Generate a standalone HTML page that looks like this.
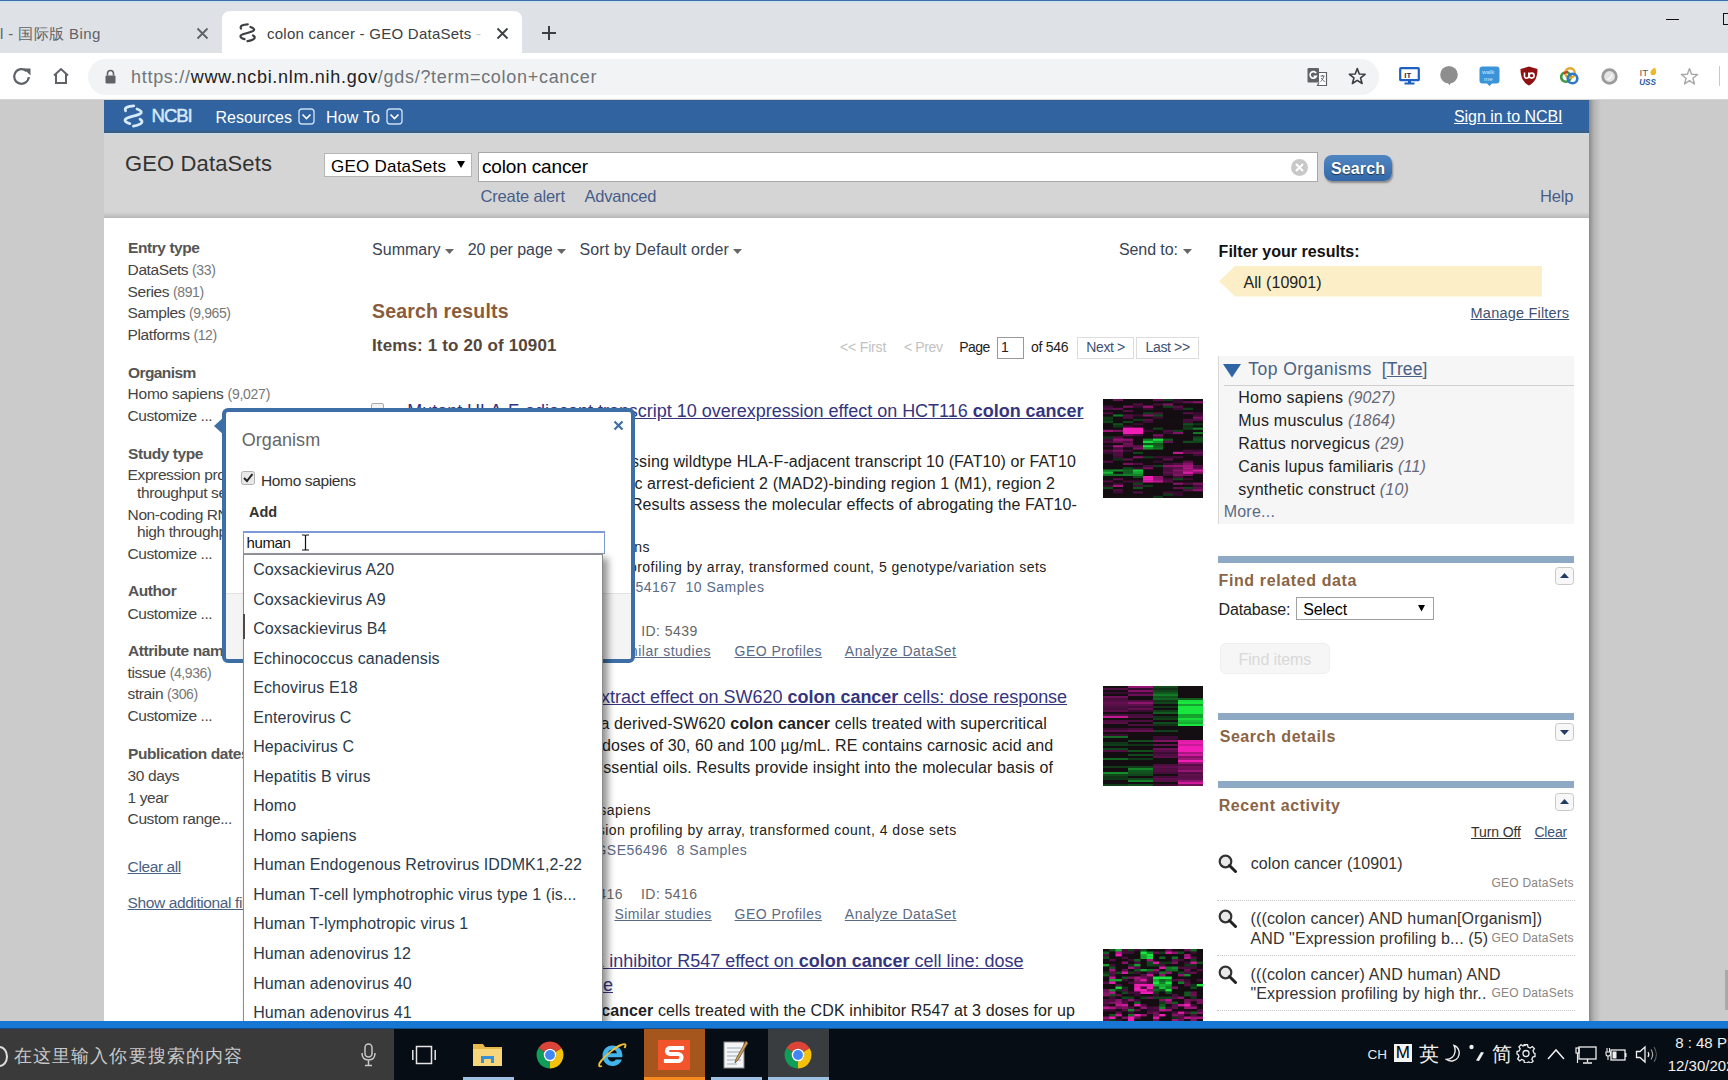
<!DOCTYPE html>
<html><head><meta charset="utf-8"><title>colon cancer - GEO DataSets</title>
<style>
html,body{margin:0;padding:0;}
body{width:1728px;height:1080px;position:relative;overflow:hidden;background:#cbcbcb;font-family:'Liberation Sans', sans-serif;}
b{font-weight:700;}
</style></head><body>
<div style="position:absolute;left:0;top:0;width:1728px;height:53px;background:#dee1e6;"></div>
<div style="position:absolute;left:0;top:0;width:1728px;height:1px;background:#3b6fa8;"></div>
<div style="position:absolute;left:0;top:1px;width:1728px;height:2px;background:#cfe0f0;"></div>
<div style="position:absolute;left:222px;top:11px;width:300px;height:43px;background:#fff;border-radius:8px 8px 0 0;"></div>
<div style="position:absolute;left:0;top:53px;width:1728px;height:46px;background:#fff;border-bottom:1px solid #d6d6d6;"></div>
<div style="position:absolute;left:88px;top:59px;width:1291px;height:36px;background:#f1f3f4;border-radius:18px;"></div>
<svg style="position:absolute;left:196px;top:27px" width="13" height="13"><path d="M1.5 1.5L11.5 11.5M11.5 1.5L1.5 11.5" stroke="#5f6368" stroke-width="1.8"/></svg>
<svg style="position:absolute;left:495.5px;top:27px" width="13" height="13"><path d="M1.5 1.5L11.5 11.5M11.5 1.5L1.5 11.5" stroke="#3c4043" stroke-width="1.8"/></svg>
<svg style="position:absolute;left:541px;top:25px" width="16" height="16"><path d="M8 1V15M1 8H15" stroke="#3c4043" stroke-width="2"/></svg>
<svg style="position:absolute;left:238px;top:22px" width="20" height="22" viewBox="0 0 20 22"><path d="M9.8 2.3C5 2.5 1.5 4 3 6.5M12.5 5C18 7 17 9 11 10.5C5 12 1 13 3 15.5C4 16.5 5.5 17 6.5 17.2M15 13.5C18 15 17.5 18 9.5 19.2" fill="none" stroke="#3c4043" stroke-width="2.2" stroke-linecap="round"/></svg>
<div style="position:absolute;left:1666px;top:19px;width:13px;height:1px;background:#111;"></div>
<div style="position:absolute;left:1723px;top:13px;width:12px;height:12px;border:1px solid #111;box-sizing:border-box;"></div>
<svg style="position:absolute;left:11px;top:66px" width="22" height="21" viewBox="0 0 22 21"><path d="M17.8 11A7.3 7.3 0 1 1 15.6 5.2" fill="none" stroke="#5f6368" stroke-width="2.2"/><path d="M12.5 2.5H19.5V9.5Z" fill="#5f6368"/></svg>
<svg style="position:absolute;left:52px;top:67px" width="18" height="18" viewBox="0 0 18 18"><path d="M2 8.5L9 2L16 8.5M4 7V16H14V7" fill="none" stroke="#5f6368" stroke-width="2" stroke-linejoin="miter"/></svg>
<svg style="position:absolute;left:104px;top:69px" width="13" height="15" viewBox="0 0 13 15"><path d="M3.5 6.5V4.5A3 3 0 0 1 9.5 4.5V6.5" fill="none" stroke="#5f6368" stroke-width="1.6"/><rect x="1.5" y="6.5" width="10" height="8" rx="1" fill="#5f6368"/></svg>
<svg style="position:absolute;left:1306px;top:67px" width="22" height="20" viewBox="0 0 22 20"><rect x="1.5" y="1" width="11.5" height="14.5" rx="1" fill="#5f6368"/><path d="M10.2 6.2A3.3 3.3 0 1 0 10.3 9.4H7.6" fill="none" stroke="#fff" stroke-width="1.6"/><path d="M13 5.5H20.5V18.5H11.5L13 15.5" fill="#fff" stroke="#5f6368" stroke-width="1.2"/><path d="M14.5 9H18.5M16.5 8V9M17.8 9C17.5 11.5 16 13.5 14.5 14.5M15.3 11C16 12.5 17.5 14 18.8 14.5" fill="none" stroke="#5f6368" stroke-width="1"/></svg>
<svg style="position:absolute;left:1348px;top:67.3px" width="18.5" height="18.5" viewBox="-1 -1 18.5 18.5"><polygon points="8.25,0.60 10.29,6.05 16.10,6.30 11.55,9.92 13.10,15.52 8.25,12.31 3.40,15.52 4.95,9.92 0.40,6.30 6.21,6.05" fill="none" stroke="#3c4043" stroke-width="1.6" stroke-linejoin="round"/></svg>
<svg style="position:absolute;left:1680.3px;top:66.8px" width="19" height="19" viewBox="-1 -1 19 19"><polygon points="8.50,0.60 10.60,6.21 16.58,6.47 11.90,10.20 13.50,15.98 8.50,12.67 3.50,15.98 5.10,10.20 0.42,6.47 6.40,6.21" fill="none" stroke="#a8a8a8" stroke-width="1.4" stroke-linejoin="round"/></svg>
<svg style="position:absolute;left:1399px;top:67px" width="21" height="18" viewBox="0 0 21 18"><rect x="1.2" y="1.2" width="18.6" height="12" rx="0.8" fill="#fff" stroke="#1d5fc4" stroke-width="2.2"/><text x="5.3" y="10.6" font-size="7.8" font-weight="700" font-family="Liberation Sans" fill="#1e3050">IT</text><rect x="9" y="13.5" width="3" height="2.5" fill="#1d5fc4"/><rect x="5.5" y="15.5" width="10" height="2" fill="#1d5fc4"/></svg>
<svg style="position:absolute;left:1439px;top:65px" width="20" height="23" viewBox="0 0 20 23"><circle cx="10" cy="9.8" r="8.8" fill="#8e8e8e"/><path d="M8 16L10.5 20.5L12.5 16Z" fill="#8e8e8e"/></svg>
<svg style="position:absolute;left:1478.5px;top:65.5px" width="21" height="21" viewBox="0 0 21 21"><path d="M3.5 0.5H17.5A3 3 0 0 1 20.5 3.5V14.5A3 3 0 0 1 17.5 17.5H13L10.5 20L8 17.5H3.5A3 3 0 0 1 0.5 14.5V3.5A3 3 0 0 1 3.5 0.5Z" fill="#3b94d9"/><text x="3" y="8.2" font-size="6.2" fill="#cfe8ff" font-family="Liberation Sans">walk</text><text x="5" y="14.5" font-size="6.2" fill="#cfe8ff" font-family="Liberation Sans">me</text></svg>
<svg style="position:absolute;left:1520px;top:66px" width="18" height="20" viewBox="0 0 18 20"><path d="M9 0.5L17.5 3C17.5 11 15 16.5 9 19.5C3 16.5 0.5 11 0.5 3Z" fill="#8e1212"/><path d="M4.5 6.5V10.5A2.2 2.2 0 0 0 8.8 10.5V6.5" fill="none" stroke="#fff" stroke-width="1.6"/><circle cx="11.6" cy="9.6" r="2.5" fill="none" stroke="#fff" stroke-width="1.6"/></svg>
<svg style="position:absolute;left:1560px;top:66.5px" width="19" height="18" viewBox="0 0 19 18"><circle cx="6" cy="10" r="4.8" fill="none" stroke="#3f9a3f" stroke-width="2.6"/><circle cx="10" cy="6" r="4.8" fill="none" stroke="#e2a72a" stroke-width="2.4"/><circle cx="12.5" cy="11.5" r="4.8" fill="none" stroke="#2d78c8" stroke-width="2.6"/><path d="M4 7C5 5 7 4.5 8 5" fill="none" stroke="#c93a2a" stroke-width="2"/></svg>
<svg style="position:absolute;left:1600.5px;top:68px" width="17" height="17" viewBox="0 0 17 17"><circle cx="8.5" cy="8.5" r="6.8" fill="#e4e4e4" stroke="#9a9a9a" stroke-width="2.8"/><path d="M6 11.5C8 11 10.5 9.5 11 6.5" fill="none" stroke="#fff" stroke-width="1.2"/></svg>
<svg style="position:absolute;left:1638px;top:65px" width="22" height="21" viewBox="0 0 22 21"><text x="1.5" y="10.8" font-size="9.8" fill="#5a5a5a" font-family="Liberation Sans">IT</text><path d="M12.5 8C12.5 5 15 3.5 17.5 2.5C17 4 18.5 5 18 8C17.5 11 12.5 11 12.5 8Z" fill="#f1b52a"/><text x="1.2" y="19.5" font-size="8.2" font-weight="700" font-style="italic" fill="#2a5aa8" font-family="Liberation Sans">USS</text></svg>
<div style="position:absolute;left:1719px;top:66px;width:1px;height:20px;background:#c8c8c8;"></div>
<div style="position:absolute;left:104px;top:100px;width:1485px;height:921px;background:#fff;"></div>
<div style="position:absolute;left:1589px;top:100px;width:12px;height:921px;background:linear-gradient(to right, rgba(0,0,0,0.32), rgba(0,0,0,0.12) 40%, rgba(0,0,0,0));"></div>
<div style="position:absolute;left:104px;top:100px;width:1485px;height:33px;background:linear-gradient(#3d5f85 0, #3163a0 1.5px, #3064a0 30px, #3a5c80 32px, #3a5c80 33px);"></div>
<div style="position:absolute;left:104px;top:133px;width:1485px;height:2px;background:linear-gradient(#c6dcf0,#d3d8dc);z-index:1"></div>
<div style="position:absolute;left:104px;top:133px;width:1485px;height:85px;background:linear-gradient(#d5d5d5 0, #d5d5d5 79px, #c2c2c2 83px, #b5b5b5 85px);"></div>
<svg style="position:absolute;left:122px;top:102.5px" width="24" height="26.4" viewBox="0 0 20 22"><path d="M9.8 2.3C5 2.5 1.5 4 3 6.5M12.5 5C18 7 17 9 11 10.5C5 12 1 13 3 15.5C4 16.5 5.5 17 6.5 17.2M15 13.5C18 15 17.5 18 9.5 19.2" fill="none" stroke="#d6eafb" stroke-width="2.3" stroke-linecap="round"/></svg>
<svg style="position:absolute;left:298px;top:108px" width="17" height="17" viewBox="0 0 17 17"><rect x="1" y="1" width="15" height="15" rx="3" fill="none" stroke="#c9def3" stroke-width="1.4"/><path d="M4.5 6.5L8.5 10.5L12.5 6.5" fill="none" stroke="#fff" stroke-width="1.6"/></svg>
<svg style="position:absolute;left:386px;top:108px" width="17" height="17" viewBox="0 0 17 17"><rect x="1" y="1" width="15" height="15" rx="3" fill="none" stroke="#c9def3" stroke-width="1.4"/><path d="M4.5 6.5L8.5 10.5L12.5 6.5" fill="none" stroke="#fff" stroke-width="1.6"/></svg>
<div style="position:absolute;left:324px;top:153px;width:148px;height:24px;background:#fff;border:1px solid #b5b5b5;box-sizing:border-box;"></div>
<svg style="position:absolute;left:457px;top:161px;z-index:2" width="8" height="7" viewBox="0 0 8 7"><path d="M0 0H8L4 7Z" fill="#000"/></svg>
<div style="position:absolute;left:478px;top:152px;width:840px;height:30px;background:#fff;border:1px solid #a8a8a8;box-sizing:border-box;"></div>
<svg style="position:absolute;left:1290px;top:158px;z-index:2" width="19" height="19" viewBox="0 0 19 19"><circle cx="9.5" cy="9.5" r="8.5" fill="#c8c8c8"/><path d="M6 6L13 13M13 6L6 13" stroke="#fff" stroke-width="2"/></svg>
<div style="position:absolute;left:1324px;top:155px;width:68px;height:26px;background:linear-gradient(#4f86c2,#3468a8);border-radius:8px;box-shadow:1px 2px 2px rgba(0,0,0,0.35);z-index:2"></div>
<svg style="position:absolute;left:445.2px;top:248.6px" width="10" height="6"><path d="M0 0H9L4.5 5Z" fill="#666"/></svg>
<svg style="position:absolute;left:556.8px;top:248.6px" width="10" height="6"><path d="M0 0H9L4.5 5Z" fill="#666"/></svg>
<svg style="position:absolute;left:733px;top:248.6px" width="10" height="6"><path d="M0 0H9L4.5 5Z" fill="#666"/></svg>
<svg style="position:absolute;left:1182.8px;top:248.6px" width="10" height="6"><path d="M0 0H9L4.5 5Z" fill="#666"/></svg>
<div style="position:absolute;left:997px;top:336.5px;width:27px;height:22px;border:1px solid #999;box-sizing:border-box;"></div>
<div style="position:absolute;left:1077px;top:336.5px;width:57px;height:22px;border:1px solid #ddd;box-sizing:border-box;"></div>
<div style="position:absolute;left:1136px;top:336.5px;width:63px;height:22px;border:1px solid #ddd;box-sizing:border-box;"></div>
<div style="position:absolute;left:371px;top:403px;width:13px;height:13px;border:1px solid #aaa;border-radius:2px;background:#f3f3f3;box-sizing:border-box;"></div>
<svg style="position:absolute;left:1103px;top:399px;z-index:1" width="100" height="99" viewBox="0 0 100 99"><rect width="100" height="99" fill="#120c10"/><rect x="0.0" y="0.0" width="10.5" height="2.5" fill="#140d11"/><rect x="0.0" y="2.2" width="10.5" height="2.5" fill="#140d11"/><rect x="0.0" y="4.4" width="10.5" height="2.5" fill="#140d11"/><rect x="0.0" y="6.6" width="10.5" height="2.5" fill="rgb(66,13,56)"/><rect x="0.0" y="8.8" width="10.5" height="2.5" fill="rgb(81,14,66)"/><rect x="0.0" y="11.0" width="10.5" height="2.5" fill="#140d11"/><rect x="0.0" y="13.2" width="10.5" height="2.5" fill="rgb(78,14,64)"/><rect x="0.0" y="15.4" width="10.5" height="2.5" fill="#140d11"/><rect x="0.0" y="17.6" width="10.5" height="2.5" fill="rgb(16,55,24)"/><rect x="0.0" y="19.8" width="10.5" height="2.5" fill="rgb(16,52,24)"/><rect x="0.0" y="22.0" width="10.5" height="2.5" fill="rgb(17,70,27)"/><rect x="0.0" y="24.2" width="10.5" height="2.5" fill="#140d11"/><rect x="0.0" y="26.4" width="10.5" height="2.5" fill="#140d11"/><rect x="0.0" y="28.6" width="10.5" height="2.5" fill="#140d11"/><rect x="0.0" y="30.8" width="10.5" height="2.5" fill="rgb(152,21,117)"/><rect x="0.0" y="33.0" width="10.5" height="2.5" fill="#140d11"/><rect x="0.0" y="35.2" width="10.5" height="2.5" fill="#140d11"/><rect x="0.0" y="37.4" width="10.5" height="2.5" fill="rgb(16,54,24)"/><rect x="0.0" y="39.6" width="10.5" height="2.5" fill="rgb(59,12,50)"/><rect x="0.0" y="41.8" width="10.5" height="2.5" fill="rgb(74,14,61)"/><rect x="0.0" y="44.0" width="10.5" height="2.5" fill="#140d11"/><rect x="0.0" y="46.2" width="10.5" height="2.5" fill="rgb(59,12,51)"/><rect x="0.0" y="48.4" width="10.5" height="2.5" fill="#140d11"/><rect x="0.0" y="50.6" width="10.5" height="2.5" fill="rgb(85,15,69)"/><rect x="0.0" y="52.8" width="10.5" height="2.5" fill="rgb(58,12,50)"/><rect x="0.0" y="55.0" width="10.5" height="2.5" fill="#140d11"/><rect x="0.0" y="57.2" width="10.5" height="2.5" fill="#140d11"/><rect x="0.0" y="59.4" width="10.5" height="2.5" fill="#140d11"/><rect x="0.0" y="61.6" width="10.5" height="2.5" fill="rgb(81,14,66)"/><rect x="0.0" y="63.8" width="10.5" height="2.5" fill="#140d11"/><rect x="0.0" y="66.0" width="10.5" height="2.5" fill="#140d11"/><rect x="0.0" y="68.2" width="10.5" height="2.5" fill="#140d11"/><rect x="0.0" y="70.4" width="10.5" height="2.5" fill="rgb(20,128,40)"/><rect x="0.0" y="72.6" width="10.5" height="2.5" fill="rgb(22,186,53)"/><rect x="0.0" y="74.8" width="10.5" height="2.5" fill="rgb(19,112,37)"/><rect x="0.0" y="77.0" width="10.5" height="2.5" fill="#140d11"/><rect x="0.0" y="79.2" width="10.5" height="2.5" fill="#140d11"/><rect x="0.0" y="81.4" width="10.5" height="2.5" fill="rgb(81,14,66)"/><rect x="0.0" y="83.6" width="10.5" height="2.5" fill="#140d11"/><rect x="0.0" y="85.8" width="10.5" height="2.5" fill="rgb(55,12,48)"/><rect x="0.0" y="88.0" width="10.5" height="2.5" fill="rgb(17,72,28)"/><rect x="0.0" y="90.2" width="10.5" height="2.5" fill="#140d11"/><rect x="0.0" y="92.4" width="10.5" height="2.5" fill="#140d11"/><rect x="0.0" y="94.6" width="10.5" height="2.5" fill="#140d11"/><rect x="0.0" y="96.8" width="10.5" height="2.5" fill="#140d11"/><rect x="10.0" y="0.0" width="10.5" height="2.5" fill="rgb(105,17,84)"/><rect x="10.0" y="2.2" width="10.5" height="2.5" fill="#140d11"/><rect x="10.0" y="4.4" width="10.5" height="2.5" fill="#140d11"/><rect x="10.0" y="6.6" width="10.5" height="2.5" fill="#140d11"/><rect x="10.0" y="8.8" width="10.5" height="2.5" fill="rgb(92,15,74)"/><rect x="10.0" y="11.0" width="10.5" height="2.5" fill="#140d11"/><rect x="10.0" y="13.2" width="10.5" height="2.5" fill="#140d11"/><rect x="10.0" y="15.4" width="10.5" height="2.5" fill="rgb(19,117,38)"/><rect x="10.0" y="17.6" width="10.5" height="2.5" fill="#140d11"/><rect x="10.0" y="19.8" width="10.5" height="2.5" fill="#140d11"/><rect x="10.0" y="22.0" width="10.5" height="2.5" fill="#140d11"/><rect x="10.0" y="24.2" width="10.5" height="2.5" fill="rgb(17,79,29)"/><rect x="10.0" y="26.4" width="10.5" height="2.5" fill="rgb(16,53,24)"/><rect x="10.0" y="28.6" width="10.5" height="2.5" fill="#140d11"/><rect x="10.0" y="30.8" width="10.5" height="2.5" fill="rgb(119,18,94)"/><rect x="10.0" y="33.0" width="10.5" height="2.5" fill="#140d11"/><rect x="10.0" y="35.2" width="10.5" height="2.5" fill="#140d11"/><rect x="10.0" y="37.4" width="10.5" height="2.5" fill="rgb(88,15,72)"/><rect x="10.0" y="39.6" width="10.5" height="2.5" fill="rgb(147,21,113)"/><rect x="10.0" y="41.8" width="10.5" height="2.5" fill="rgb(106,17,84)"/><rect x="10.0" y="44.0" width="10.5" height="2.5" fill="#140d11"/><rect x="10.0" y="46.2" width="10.5" height="2.5" fill="rgb(167,23,128)"/><rect x="10.0" y="48.4" width="10.5" height="2.5" fill="rgb(72,14,60)"/><rect x="10.0" y="50.6" width="10.5" height="2.5" fill="rgb(119,18,94)"/><rect x="10.0" y="52.8" width="10.5" height="2.5" fill="rgb(74,14,61)"/><rect x="10.0" y="55.0" width="10.5" height="2.5" fill="rgb(79,14,65)"/><rect x="10.0" y="57.2" width="10.5" height="2.5" fill="rgb(67,13,56)"/><rect x="10.0" y="59.4" width="10.5" height="2.5" fill="rgb(16,51,23)"/><rect x="10.0" y="61.6" width="10.5" height="2.5" fill="#140d11"/><rect x="10.0" y="63.8" width="10.5" height="2.5" fill="#140d11"/><rect x="10.0" y="66.0" width="10.5" height="2.5" fill="#140d11"/><rect x="10.0" y="68.2" width="10.5" height="2.5" fill="#140d11"/><rect x="10.0" y="70.4" width="10.5" height="2.5" fill="rgb(20,138,42)"/><rect x="10.0" y="72.6" width="10.5" height="2.5" fill="#140d11"/><rect x="10.0" y="74.8" width="10.5" height="2.5" fill="rgb(19,113,37)"/><rect x="10.0" y="77.0" width="10.5" height="2.5" fill="#140d11"/><rect x="10.0" y="79.2" width="10.5" height="2.5" fill="rgb(88,15,72)"/><rect x="10.0" y="81.4" width="10.5" height="2.5" fill="#140d11"/><rect x="10.0" y="83.6" width="10.5" height="2.5" fill="rgb(57,12,49)"/><rect x="10.0" y="85.8" width="10.5" height="2.5" fill="rgb(162,22,124)"/><rect x="10.0" y="88.0" width="10.5" height="2.5" fill="#140d11"/><rect x="10.0" y="90.2" width="10.5" height="2.5" fill="rgb(76,14,63)"/><rect x="10.0" y="92.4" width="10.5" height="2.5" fill="rgb(56,12,48)"/><rect x="10.0" y="94.6" width="10.5" height="2.5" fill="#140d11"/><rect x="10.0" y="96.8" width="10.5" height="2.5" fill="#140d11"/><rect x="20.0" y="0.0" width="10.5" height="2.5" fill="#140d11"/><rect x="20.0" y="2.2" width="10.5" height="2.5" fill="#140d11"/><rect x="20.0" y="4.4" width="10.5" height="2.5" fill="#140d11"/><rect x="20.0" y="6.6" width="10.5" height="2.5" fill="rgb(121,18,95)"/><rect x="20.0" y="8.8" width="10.5" height="2.5" fill="#140d11"/><rect x="20.0" y="11.0" width="10.5" height="2.5" fill="rgb(81,14,66)"/><rect x="20.0" y="13.2" width="10.5" height="2.5" fill="#140d11"/><rect x="20.0" y="15.4" width="10.5" height="2.5" fill="rgb(83,15,68)"/><rect x="20.0" y="17.6" width="10.5" height="2.5" fill="rgb(76,14,62)"/><rect x="20.0" y="19.8" width="10.5" height="2.5" fill="#140d11"/><rect x="20.0" y="22.0" width="10.5" height="2.5" fill="rgb(17,68,27)"/><rect x="20.0" y="24.2" width="10.5" height="2.5" fill="#140d11"/><rect x="20.0" y="26.4" width="10.5" height="2.5" fill="rgb(59,12,51)"/><rect x="20.0" y="28.6" width="10.5" height="2.5" fill="rgb(240,30,180)"/><rect x="20.0" y="30.8" width="10.5" height="2.5" fill="rgb(240,30,180)"/><rect x="20.0" y="33.0" width="10.5" height="2.5" fill="rgb(240,30,180)"/><rect x="20.0" y="35.2" width="10.5" height="2.5" fill="rgb(96,16,77)"/><rect x="20.0" y="37.4" width="10.5" height="2.5" fill="#140d11"/><rect x="20.0" y="39.6" width="10.5" height="2.5" fill="rgb(142,20,110)"/><rect x="20.0" y="41.8" width="10.5" height="2.5" fill="rgb(83,15,68)"/><rect x="20.0" y="44.0" width="10.5" height="2.5" fill="rgb(111,17,87)"/><rect x="20.0" y="46.2" width="10.5" height="2.5" fill="rgb(104,17,82)"/><rect x="20.0" y="48.4" width="10.5" height="2.5" fill="#140d11"/><rect x="20.0" y="50.6" width="10.5" height="2.5" fill="rgb(62,13,53)"/><rect x="20.0" y="52.8" width="10.5" height="2.5" fill="#140d11"/><rect x="20.0" y="55.0" width="10.5" height="2.5" fill="#140d11"/><rect x="20.0" y="57.2" width="10.5" height="2.5" fill="#140d11"/><rect x="20.0" y="59.4" width="10.5" height="2.5" fill="rgb(96,16,77)"/><rect x="20.0" y="61.6" width="10.5" height="2.5" fill="#140d11"/><rect x="20.0" y="63.8" width="10.5" height="2.5" fill="rgb(118,18,92)"/><rect x="20.0" y="66.0" width="10.5" height="2.5" fill="#140d11"/><rect x="20.0" y="68.2" width="10.5" height="2.5" fill="rgb(17,69,27)"/><rect x="20.0" y="70.4" width="10.5" height="2.5" fill="rgb(18,104,35)"/><rect x="20.0" y="72.6" width="10.5" height="2.5" fill="rgb(18,94,33)"/><rect x="20.0" y="74.8" width="10.5" height="2.5" fill="rgb(19,125,40)"/><rect x="20.0" y="77.0" width="10.5" height="2.5" fill="#140d11"/><rect x="20.0" y="79.2" width="10.5" height="2.5" fill="#140d11"/><rect x="20.0" y="81.4" width="10.5" height="2.5" fill="rgb(66,13,55)"/><rect x="20.0" y="83.6" width="10.5" height="2.5" fill="#140d11"/><rect x="20.0" y="85.8" width="10.5" height="2.5" fill="#140d11"/><rect x="20.0" y="88.0" width="10.5" height="2.5" fill="#140d11"/><rect x="20.0" y="90.2" width="10.5" height="2.5" fill="#140d11"/><rect x="20.0" y="92.4" width="10.5" height="2.5" fill="#140d11"/><rect x="20.0" y="94.6" width="10.5" height="2.5" fill="#140d11"/><rect x="20.0" y="96.8" width="10.5" height="2.5" fill="#140d11"/><rect x="30.0" y="0.0" width="10.5" height="2.5" fill="#140d11"/><rect x="30.0" y="2.2" width="10.5" height="2.5" fill="#140d11"/><rect x="30.0" y="4.4" width="10.5" height="2.5" fill="rgb(80,14,66)"/><rect x="30.0" y="6.6" width="10.5" height="2.5" fill="rgb(55,12,48)"/><rect x="30.0" y="8.8" width="10.5" height="2.5" fill="#140d11"/><rect x="30.0" y="11.0" width="10.5" height="2.5" fill="#140d11"/><rect x="30.0" y="13.2" width="10.5" height="2.5" fill="#140d11"/><rect x="30.0" y="15.4" width="10.5" height="2.5" fill="rgb(58,12,50)"/><rect x="30.0" y="17.6" width="10.5" height="2.5" fill="#140d11"/><rect x="30.0" y="19.8" width="10.5" height="2.5" fill="rgb(16,57,25)"/><rect x="30.0" y="22.0" width="10.5" height="2.5" fill="#140d11"/><rect x="30.0" y="24.2" width="10.5" height="2.5" fill="rgb(62,13,53)"/><rect x="30.0" y="26.4" width="10.5" height="2.5" fill="#140d11"/><rect x="30.0" y="28.6" width="10.5" height="2.5" fill="rgb(240,30,180)"/><rect x="30.0" y="30.8" width="10.5" height="2.5" fill="rgb(240,30,180)"/><rect x="30.0" y="33.0" width="10.5" height="2.5" fill="rgb(240,30,180)"/><rect x="30.0" y="35.2" width="10.5" height="2.5" fill="rgb(66,13,56)"/><rect x="30.0" y="37.4" width="10.5" height="2.5" fill="#140d11"/><rect x="30.0" y="39.6" width="10.5" height="2.5" fill="#140d11"/><rect x="30.0" y="41.8" width="10.5" height="2.5" fill="#140d11"/><rect x="30.0" y="44.0" width="10.5" height="2.5" fill="#140d11"/><rect x="30.0" y="46.2" width="10.5" height="2.5" fill="rgb(94,16,76)"/><rect x="30.0" y="48.4" width="10.5" height="2.5" fill="rgb(128,19,100)"/><rect x="30.0" y="50.6" width="10.5" height="2.5" fill="#140d11"/><rect x="30.0" y="52.8" width="10.5" height="2.5" fill="rgb(17,67,27)"/><rect x="30.0" y="55.0" width="10.5" height="2.5" fill="#140d11"/><rect x="30.0" y="57.2" width="10.5" height="2.5" fill="rgb(129,19,101)"/><rect x="30.0" y="59.4" width="10.5" height="2.5" fill="#140d11"/><rect x="30.0" y="61.6" width="10.5" height="2.5" fill="#140d11"/><rect x="30.0" y="63.8" width="10.5" height="2.5" fill="rgb(78,14,64)"/><rect x="30.0" y="66.0" width="10.5" height="2.5" fill="#140d11"/><rect x="30.0" y="68.2" width="10.5" height="2.5" fill="rgb(59,12,51)"/><rect x="30.0" y="70.4" width="10.5" height="2.5" fill="rgb(23,199,56)"/><rect x="30.0" y="72.6" width="10.5" height="2.5" fill="rgb(21,165,48)"/><rect x="30.0" y="74.8" width="10.5" height="2.5" fill="rgb(20,133,41)"/><rect x="30.0" y="77.0" width="10.5" height="2.5" fill="rgb(17,73,28)"/><rect x="30.0" y="79.2" width="10.5" height="2.5" fill="#140d11"/><rect x="30.0" y="81.4" width="10.5" height="2.5" fill="rgb(63,13,53)"/><rect x="30.0" y="83.6" width="10.5" height="2.5" fill="rgb(17,66,27)"/><rect x="30.0" y="85.8" width="10.5" height="2.5" fill="rgb(71,13,59)"/><rect x="30.0" y="88.0" width="10.5" height="2.5" fill="rgb(17,82,30)"/><rect x="30.0" y="90.2" width="10.5" height="2.5" fill="#140d11"/><rect x="30.0" y="92.4" width="10.5" height="2.5" fill="rgb(79,14,65)"/><rect x="30.0" y="94.6" width="10.5" height="2.5" fill="#140d11"/><rect x="30.0" y="96.8" width="10.5" height="2.5" fill="#140d11"/><rect x="40.0" y="0.0" width="10.5" height="2.5" fill="#140d11"/><rect x="40.0" y="2.2" width="10.5" height="2.5" fill="#140d11"/><rect x="40.0" y="4.4" width="10.5" height="2.5" fill="#140d11"/><rect x="40.0" y="6.6" width="10.5" height="2.5" fill="rgb(152,21,117)"/><rect x="40.0" y="8.8" width="10.5" height="2.5" fill="rgb(57,12,49)"/><rect x="40.0" y="11.0" width="10.5" height="2.5" fill="#140d11"/><rect x="40.0" y="13.2" width="10.5" height="2.5" fill="rgb(16,64,26)"/><rect x="40.0" y="15.4" width="10.5" height="2.5" fill="rgb(132,19,102)"/><rect x="40.0" y="17.6" width="10.5" height="2.5" fill="#140d11"/><rect x="40.0" y="19.8" width="10.5" height="2.5" fill="rgb(84,15,68)"/><rect x="40.0" y="22.0" width="10.5" height="2.5" fill="rgb(62,13,52)"/><rect x="40.0" y="24.2" width="10.5" height="2.5" fill="#140d11"/><rect x="40.0" y="26.4" width="10.5" height="2.5" fill="#140d11"/><rect x="40.0" y="28.6" width="10.5" height="2.5" fill="#140d11"/><rect x="40.0" y="30.8" width="10.5" height="2.5" fill="rgb(59,12,51)"/><rect x="40.0" y="33.0" width="10.5" height="2.5" fill="#140d11"/><rect x="40.0" y="35.2" width="10.5" height="2.5" fill="#140d11"/><rect x="40.0" y="37.4" width="10.5" height="2.5" fill="#140d11"/><rect x="40.0" y="39.6" width="10.5" height="2.5" fill="rgb(19,119,38)"/><rect x="40.0" y="41.8" width="10.5" height="2.5" fill="rgb(24,218,60)"/><rect x="40.0" y="44.0" width="10.5" height="2.5" fill="rgb(18,86,31)"/><rect x="40.0" y="46.2" width="10.5" height="2.5" fill="rgb(25,230,63)"/><rect x="40.0" y="48.4" width="10.5" height="2.5" fill="rgb(21,149,45)"/><rect x="40.0" y="50.6" width="10.5" height="2.5" fill="#140d11"/><rect x="40.0" y="52.8" width="10.5" height="2.5" fill="#140d11"/><rect x="40.0" y="55.0" width="10.5" height="2.5" fill="#140d11"/><rect x="40.0" y="57.2" width="10.5" height="2.5" fill="rgb(16,61,25)"/><rect x="40.0" y="59.4" width="10.5" height="2.5" fill="#140d11"/><rect x="40.0" y="61.6" width="10.5" height="2.5" fill="#140d11"/><rect x="40.0" y="63.8" width="10.5" height="2.5" fill="#140d11"/><rect x="40.0" y="66.0" width="10.5" height="2.5" fill="rgb(71,13,59)"/><rect x="40.0" y="68.2" width="10.5" height="2.5" fill="rgb(114,18,90)"/><rect x="40.0" y="70.4" width="10.5" height="2.5" fill="#140d11"/><rect x="40.0" y="72.6" width="10.5" height="2.5" fill="#140d11"/><rect x="40.0" y="74.8" width="10.5" height="2.5" fill="#140d11"/><rect x="40.0" y="77.0" width="10.5" height="2.5" fill="rgb(240,30,180)"/><rect x="40.0" y="79.2" width="10.5" height="2.5" fill="rgb(240,30,180)"/><rect x="40.0" y="81.4" width="10.5" height="2.5" fill="rgb(224,28,168)"/><rect x="40.0" y="83.6" width="10.5" height="2.5" fill="#140d11"/><rect x="40.0" y="85.8" width="10.5" height="2.5" fill="rgb(16,55,24)"/><rect x="40.0" y="88.0" width="10.5" height="2.5" fill="#140d11"/><rect x="40.0" y="90.2" width="10.5" height="2.5" fill="#140d11"/><rect x="40.0" y="92.4" width="10.5" height="2.5" fill="#140d11"/><rect x="40.0" y="94.6" width="10.5" height="2.5" fill="#140d11"/><rect x="40.0" y="96.8" width="10.5" height="2.5" fill="#140d11"/><rect x="50.0" y="0.0" width="10.5" height="2.5" fill="rgb(95,16,76)"/><rect x="50.0" y="2.2" width="10.5" height="2.5" fill="#140d11"/><rect x="50.0" y="4.4" width="10.5" height="2.5" fill="rgb(68,13,57)"/><rect x="50.0" y="6.6" width="10.5" height="2.5" fill="#140d11"/><rect x="50.0" y="8.8" width="10.5" height="2.5" fill="#140d11"/><rect x="50.0" y="11.0" width="10.5" height="2.5" fill="#140d11"/><rect x="50.0" y="13.2" width="10.5" height="2.5" fill="rgb(77,14,64)"/><rect x="50.0" y="15.4" width="10.5" height="2.5" fill="rgb(17,73,28)"/><rect x="50.0" y="17.6" width="10.5" height="2.5" fill="rgb(59,12,50)"/><rect x="50.0" y="19.8" width="10.5" height="2.5" fill="#140d11"/><rect x="50.0" y="22.0" width="10.5" height="2.5" fill="#140d11"/><rect x="50.0" y="24.2" width="10.5" height="2.5" fill="#140d11"/><rect x="50.0" y="26.4" width="10.5" height="2.5" fill="#140d11"/><rect x="50.0" y="28.6" width="10.5" height="2.5" fill="rgb(16,63,26)"/><rect x="50.0" y="30.8" width="10.5" height="2.5" fill="#140d11"/><rect x="50.0" y="33.0" width="10.5" height="2.5" fill="#140d11"/><rect x="50.0" y="35.2" width="10.5" height="2.5" fill="rgb(121,18,95)"/><rect x="50.0" y="37.4" width="10.5" height="2.5" fill="rgb(65,13,55)"/><rect x="50.0" y="39.6" width="10.5" height="2.5" fill="rgb(24,221,61)"/><rect x="50.0" y="41.8" width="10.5" height="2.5" fill="rgb(21,152,45)"/><rect x="50.0" y="44.0" width="10.5" height="2.5" fill="rgb(17,85,31)"/><rect x="50.0" y="46.2" width="10.5" height="2.5" fill="rgb(18,101,34)"/><rect x="50.0" y="48.4" width="10.5" height="2.5" fill="rgb(19,121,39)"/><rect x="50.0" y="50.6" width="10.5" height="2.5" fill="#140d11"/><rect x="50.0" y="52.8" width="10.5" height="2.5" fill="#140d11"/><rect x="50.0" y="55.0" width="10.5" height="2.5" fill="#140d11"/><rect x="50.0" y="57.2" width="10.5" height="2.5" fill="rgb(68,13,57)"/><rect x="50.0" y="59.4" width="10.5" height="2.5" fill="#140d11"/><rect x="50.0" y="61.6" width="10.5" height="2.5" fill="rgb(55,12,48)"/><rect x="50.0" y="63.8" width="10.5" height="2.5" fill="#140d11"/><rect x="50.0" y="66.0" width="10.5" height="2.5" fill="rgb(16,60,25)"/><rect x="50.0" y="68.2" width="10.5" height="2.5" fill="#140d11"/><rect x="50.0" y="70.4" width="10.5" height="2.5" fill="#140d11"/><rect x="50.0" y="72.6" width="10.5" height="2.5" fill="#140d11"/><rect x="50.0" y="74.8" width="10.5" height="2.5" fill="#140d11"/><rect x="50.0" y="77.0" width="10.5" height="2.5" fill="rgb(135,20,105)"/><rect x="50.0" y="79.2" width="10.5" height="2.5" fill="rgb(146,21,113)"/><rect x="50.0" y="81.4" width="10.5" height="2.5" fill="rgb(191,25,145)"/><rect x="50.0" y="83.6" width="10.5" height="2.5" fill="#140d11"/><rect x="50.0" y="85.8" width="10.5" height="2.5" fill="#140d11"/><rect x="50.0" y="88.0" width="10.5" height="2.5" fill="#140d11"/><rect x="50.0" y="90.2" width="10.5" height="2.5" fill="#140d11"/><rect x="50.0" y="92.4" width="10.5" height="2.5" fill="#140d11"/><rect x="50.0" y="94.6" width="10.5" height="2.5" fill="#140d11"/><rect x="50.0" y="96.8" width="10.5" height="2.5" fill="rgb(16,57,25)"/><rect x="60.0" y="0.0" width="10.5" height="2.5" fill="rgb(16,61,26)"/><rect x="60.0" y="2.2" width="10.5" height="2.5" fill="#140d11"/><rect x="60.0" y="4.4" width="10.5" height="2.5" fill="rgb(127,19,99)"/><rect x="60.0" y="6.6" width="10.5" height="2.5" fill="rgb(16,65,26)"/><rect x="60.0" y="8.8" width="10.5" height="2.5" fill="#140d11"/><rect x="60.0" y="11.0" width="10.5" height="2.5" fill="#140d11"/><rect x="60.0" y="13.2" width="10.5" height="2.5" fill="#140d11"/><rect x="60.0" y="15.4" width="10.5" height="2.5" fill="#140d11"/><rect x="60.0" y="17.6" width="10.5" height="2.5" fill="#140d11"/><rect x="60.0" y="19.8" width="10.5" height="2.5" fill="#140d11"/><rect x="60.0" y="22.0" width="10.5" height="2.5" fill="#140d11"/><rect x="60.0" y="24.2" width="10.5" height="2.5" fill="#140d11"/><rect x="60.0" y="26.4" width="10.5" height="2.5" fill="#140d11"/><rect x="60.0" y="28.6" width="10.5" height="2.5" fill="#140d11"/><rect x="60.0" y="30.8" width="10.5" height="2.5" fill="rgb(72,14,60)"/><rect x="60.0" y="33.0" width="10.5" height="2.5" fill="rgb(60,12,51)"/><rect x="60.0" y="35.2" width="10.5" height="2.5" fill="#140d11"/><rect x="60.0" y="37.4" width="10.5" height="2.5" fill="#140d11"/><rect x="60.0" y="39.6" width="10.5" height="2.5" fill="rgb(17,86,31)"/><rect x="60.0" y="41.8" width="10.5" height="2.5" fill="rgb(96,16,77)"/><rect x="60.0" y="44.0" width="10.5" height="2.5" fill="#140d11"/><rect x="60.0" y="46.2" width="10.5" height="2.5" fill="#140d11"/><rect x="60.0" y="48.4" width="10.5" height="2.5" fill="#140d11"/><rect x="60.0" y="50.6" width="10.5" height="2.5" fill="#140d11"/><rect x="60.0" y="52.8" width="10.5" height="2.5" fill="#140d11"/><rect x="60.0" y="55.0" width="10.5" height="2.5" fill="#140d11"/><rect x="60.0" y="57.2" width="10.5" height="2.5" fill="rgb(57,12,49)"/><rect x="60.0" y="59.4" width="10.5" height="2.5" fill="rgb(95,16,76)"/><rect x="60.0" y="61.6" width="10.5" height="2.5" fill="#140d11"/><rect x="60.0" y="63.8" width="10.5" height="2.5" fill="rgb(57,12,49)"/><rect x="60.0" y="66.0" width="10.5" height="2.5" fill="rgb(136,20,106)"/><rect x="60.0" y="68.2" width="10.5" height="2.5" fill="rgb(81,14,67)"/><rect x="60.0" y="70.4" width="10.5" height="2.5" fill="rgb(81,14,66)"/><rect x="60.0" y="72.6" width="10.5" height="2.5" fill="rgb(97,16,78)"/><rect x="60.0" y="74.8" width="10.5" height="2.5" fill="rgb(64,13,54)"/><rect x="60.0" y="77.0" width="10.5" height="2.5" fill="#140d11"/><rect x="60.0" y="79.2" width="10.5" height="2.5" fill="rgb(69,13,58)"/><rect x="60.0" y="81.4" width="10.5" height="2.5" fill="rgb(85,15,69)"/><rect x="60.0" y="83.6" width="10.5" height="2.5" fill="#140d11"/><rect x="60.0" y="85.8" width="10.5" height="2.5" fill="#140d11"/><rect x="60.0" y="88.0" width="10.5" height="2.5" fill="#140d11"/><rect x="60.0" y="90.2" width="10.5" height="2.5" fill="#140d11"/><rect x="60.0" y="92.4" width="10.5" height="2.5" fill="rgb(67,13,56)"/><rect x="60.0" y="94.6" width="10.5" height="2.5" fill="rgb(16,62,26)"/><rect x="60.0" y="96.8" width="10.5" height="2.5" fill="#140d11"/><rect x="70.0" y="0.0" width="10.5" height="2.5" fill="rgb(56,12,48)"/><rect x="70.0" y="2.2" width="10.5" height="2.5" fill="rgb(60,12,52)"/><rect x="70.0" y="4.4" width="10.5" height="2.5" fill="#140d11"/><rect x="70.0" y="6.6" width="10.5" height="2.5" fill="rgb(86,15,70)"/><rect x="70.0" y="8.8" width="10.5" height="2.5" fill="rgb(61,12,52)"/><rect x="70.0" y="11.0" width="10.5" height="2.5" fill="#140d11"/><rect x="70.0" y="13.2" width="10.5" height="2.5" fill="#140d11"/><rect x="70.0" y="15.4" width="10.5" height="2.5" fill="#140d11"/><rect x="70.0" y="17.6" width="10.5" height="2.5" fill="#140d11"/><rect x="70.0" y="19.8" width="10.5" height="2.5" fill="#140d11"/><rect x="70.0" y="22.0" width="10.5" height="2.5" fill="#140d11"/><rect x="70.0" y="24.2" width="10.5" height="2.5" fill="#140d11"/><rect x="70.0" y="26.4" width="10.5" height="2.5" fill="#140d11"/><rect x="70.0" y="28.6" width="10.5" height="2.5" fill="#140d11"/><rect x="70.0" y="30.8" width="10.5" height="2.5" fill="rgb(16,60,25)"/><rect x="70.0" y="33.0" width="10.5" height="2.5" fill="rgb(131,19,102)"/><rect x="70.0" y="35.2" width="10.5" height="2.5" fill="#140d11"/><rect x="70.0" y="37.4" width="10.5" height="2.5" fill="#140d11"/><rect x="70.0" y="39.6" width="10.5" height="2.5" fill="#140d11"/><rect x="70.0" y="41.8" width="10.5" height="2.5" fill="#140d11"/><rect x="70.0" y="44.0" width="10.5" height="2.5" fill="#140d11"/><rect x="70.0" y="46.2" width="10.5" height="2.5" fill="#140d11"/><rect x="70.0" y="48.4" width="10.5" height="2.5" fill="#140d11"/><rect x="70.0" y="50.6" width="10.5" height="2.5" fill="#140d11"/><rect x="70.0" y="52.8" width="10.5" height="2.5" fill="rgb(189,25,144)"/><rect x="70.0" y="55.0" width="10.5" height="2.5" fill="#140d11"/><rect x="70.0" y="57.2" width="10.5" height="2.5" fill="rgb(67,13,56)"/><rect x="70.0" y="59.4" width="10.5" height="2.5" fill="#140d11"/><rect x="70.0" y="61.6" width="10.5" height="2.5" fill="#140d11"/><rect x="70.0" y="63.8" width="10.5" height="2.5" fill="rgb(80,14,66)"/><rect x="70.0" y="66.0" width="10.5" height="2.5" fill="rgb(145,20,112)"/><rect x="70.0" y="68.2" width="10.5" height="2.5" fill="rgb(95,16,77)"/><rect x="70.0" y="70.4" width="10.5" height="2.5" fill="rgb(141,20,109)"/><rect x="70.0" y="72.6" width="10.5" height="2.5" fill="rgb(107,17,85)"/><rect x="70.0" y="74.8" width="10.5" height="2.5" fill="rgb(128,19,100)"/><rect x="70.0" y="77.0" width="10.5" height="2.5" fill="rgb(71,13,59)"/><rect x="70.0" y="79.2" width="10.5" height="2.5" fill="rgb(17,71,28)"/><rect x="70.0" y="81.4" width="10.5" height="2.5" fill="#140d11"/><rect x="70.0" y="83.6" width="10.5" height="2.5" fill="rgb(136,20,105)"/><rect x="70.0" y="85.8" width="10.5" height="2.5" fill="#140d11"/><rect x="70.0" y="88.0" width="10.5" height="2.5" fill="rgb(97,16,78)"/><rect x="70.0" y="90.2" width="10.5" height="2.5" fill="#140d11"/><rect x="70.0" y="92.4" width="10.5" height="2.5" fill="rgb(58,12,50)"/><rect x="70.0" y="94.6" width="10.5" height="2.5" fill="rgb(56,12,49)"/><rect x="70.0" y="96.8" width="10.5" height="2.5" fill="#140d11"/><rect x="80.0" y="0.0" width="10.5" height="2.5" fill="#140d11"/><rect x="80.0" y="2.2" width="10.5" height="2.5" fill="rgb(100,16,80)"/><rect x="80.0" y="4.4" width="10.5" height="2.5" fill="#140d11"/><rect x="80.0" y="6.6" width="10.5" height="2.5" fill="#140d11"/><rect x="80.0" y="8.8" width="10.5" height="2.5" fill="rgb(16,62,26)"/><rect x="80.0" y="11.0" width="10.5" height="2.5" fill="#140d11"/><rect x="80.0" y="13.2" width="10.5" height="2.5" fill="rgb(86,15,70)"/><rect x="80.0" y="15.4" width="10.5" height="2.5" fill="#140d11"/><rect x="80.0" y="17.6" width="10.5" height="2.5" fill="#140d11"/><rect x="80.0" y="19.8" width="10.5" height="2.5" fill="rgb(71,13,59)"/><rect x="80.0" y="22.0" width="10.5" height="2.5" fill="rgb(64,13,54)"/><rect x="80.0" y="24.2" width="10.5" height="2.5" fill="rgb(17,80,30)"/><rect x="80.0" y="26.4" width="10.5" height="2.5" fill="rgb(16,54,24)"/><rect x="80.0" y="28.6" width="10.5" height="2.5" fill="rgb(16,64,26)"/><rect x="80.0" y="30.8" width="10.5" height="2.5" fill="#140d11"/><rect x="80.0" y="33.0" width="10.5" height="2.5" fill="#140d11"/><rect x="80.0" y="35.2" width="10.5" height="2.5" fill="#140d11"/><rect x="80.0" y="37.4" width="10.5" height="2.5" fill="#140d11"/><rect x="80.0" y="39.6" width="10.5" height="2.5" fill="#140d11"/><rect x="80.0" y="41.8" width="10.5" height="2.5" fill="rgb(17,74,28)"/><rect x="80.0" y="44.0" width="10.5" height="2.5" fill="#140d11"/><rect x="80.0" y="46.2" width="10.5" height="2.5" fill="#140d11"/><rect x="80.0" y="48.4" width="10.5" height="2.5" fill="#140d11"/><rect x="80.0" y="50.6" width="10.5" height="2.5" fill="rgb(71,13,59)"/><rect x="80.0" y="52.8" width="10.5" height="2.5" fill="rgb(83,15,67)"/><rect x="80.0" y="55.0" width="10.5" height="2.5" fill="#140d11"/><rect x="80.0" y="57.2" width="10.5" height="2.5" fill="#140d11"/><rect x="80.0" y="59.4" width="10.5" height="2.5" fill="#140d11"/><rect x="80.0" y="61.6" width="10.5" height="2.5" fill="rgb(85,15,69)"/><rect x="80.0" y="63.8" width="10.5" height="2.5" fill="rgb(133,19,103)"/><rect x="80.0" y="66.0" width="10.5" height="2.5" fill="rgb(160,22,123)"/><rect x="80.0" y="68.2" width="10.5" height="2.5" fill="rgb(176,23,134)"/><rect x="80.0" y="70.4" width="10.5" height="2.5" fill="rgb(160,22,123)"/><rect x="80.0" y="72.6" width="10.5" height="2.5" fill="rgb(222,28,167)"/><rect x="80.0" y="74.8" width="10.5" height="2.5" fill="rgb(115,18,90)"/><rect x="80.0" y="77.0" width="10.5" height="2.5" fill="#140d11"/><rect x="80.0" y="79.2" width="10.5" height="2.5" fill="rgb(63,13,54)"/><rect x="80.0" y="81.4" width="10.5" height="2.5" fill="#140d11"/><rect x="80.0" y="83.6" width="10.5" height="2.5" fill="rgb(81,14,66)"/><rect x="80.0" y="85.8" width="10.5" height="2.5" fill="#140d11"/><rect x="80.0" y="88.0" width="10.5" height="2.5" fill="rgb(17,66,27)"/><rect x="80.0" y="90.2" width="10.5" height="2.5" fill="rgb(88,15,72)"/><rect x="80.0" y="92.4" width="10.5" height="2.5" fill="#140d11"/><rect x="80.0" y="94.6" width="10.5" height="2.5" fill="#140d11"/><rect x="80.0" y="96.8" width="10.5" height="2.5" fill="#140d11"/><rect x="90.0" y="0.0" width="10.5" height="2.5" fill="#140d11"/><rect x="90.0" y="2.2" width="10.5" height="2.5" fill="rgb(135,20,105)"/><rect x="90.0" y="4.4" width="10.5" height="2.5" fill="#140d11"/><rect x="90.0" y="6.6" width="10.5" height="2.5" fill="#140d11"/><rect x="90.0" y="8.8" width="10.5" height="2.5" fill="#140d11"/><rect x="90.0" y="11.0" width="10.5" height="2.5" fill="#140d11"/><rect x="90.0" y="13.2" width="10.5" height="2.5" fill="rgb(58,12,50)"/><rect x="90.0" y="15.4" width="10.5" height="2.5" fill="rgb(63,13,53)"/><rect x="90.0" y="17.6" width="10.5" height="2.5" fill="rgb(121,18,95)"/><rect x="90.0" y="19.8" width="10.5" height="2.5" fill="rgb(80,14,66)"/><rect x="90.0" y="22.0" width="10.5" height="2.5" fill="#140d11"/><rect x="90.0" y="24.2" width="10.5" height="2.5" fill="rgb(16,50,23)"/><rect x="90.0" y="26.4" width="10.5" height="2.5" fill="#140d11"/><rect x="90.0" y="28.6" width="10.5" height="2.5" fill="rgb(19,122,39)"/><rect x="90.0" y="30.8" width="10.5" height="2.5" fill="#140d11"/><rect x="90.0" y="33.0" width="10.5" height="2.5" fill="rgb(19,119,38)"/><rect x="90.0" y="35.2" width="10.5" height="2.5" fill="#140d11"/><rect x="90.0" y="37.4" width="10.5" height="2.5" fill="rgb(17,70,27)"/><rect x="90.0" y="39.6" width="10.5" height="2.5" fill="rgb(18,86,31)"/><rect x="90.0" y="41.8" width="10.5" height="2.5" fill="rgb(17,66,27)"/><rect x="90.0" y="44.0" width="10.5" height="2.5" fill="#140d11"/><rect x="90.0" y="46.2" width="10.5" height="2.5" fill="#140d11"/><rect x="90.0" y="48.4" width="10.5" height="2.5" fill="#140d11"/><rect x="90.0" y="50.6" width="10.5" height="2.5" fill="rgb(62,13,52)"/><rect x="90.0" y="52.8" width="10.5" height="2.5" fill="rgb(100,16,80)"/><rect x="90.0" y="55.0" width="10.5" height="2.5" fill="rgb(63,13,53)"/><rect x="90.0" y="57.2" width="10.5" height="2.5" fill="#140d11"/><rect x="90.0" y="59.4" width="10.5" height="2.5" fill="#140d11"/><rect x="90.0" y="61.6" width="10.5" height="2.5" fill="#140d11"/><rect x="90.0" y="63.8" width="10.5" height="2.5" fill="#140d11"/><rect x="90.0" y="66.0" width="10.5" height="2.5" fill="rgb(81,14,66)"/><rect x="90.0" y="68.2" width="10.5" height="2.5" fill="rgb(92,15,74)"/><rect x="90.0" y="70.4" width="10.5" height="2.5" fill="rgb(208,27,157)"/><rect x="90.0" y="72.6" width="10.5" height="2.5" fill="rgb(135,20,105)"/><rect x="90.0" y="74.8" width="10.5" height="2.5" fill="#140d11"/><rect x="90.0" y="77.0" width="10.5" height="2.5" fill="#140d11"/><rect x="90.0" y="79.2" width="10.5" height="2.5" fill="#140d11"/><rect x="90.0" y="81.4" width="10.5" height="2.5" fill="#140d11"/><rect x="90.0" y="83.6" width="10.5" height="2.5" fill="rgb(126,19,98)"/><rect x="90.0" y="85.8" width="10.5" height="2.5" fill="rgb(69,13,58)"/><rect x="90.0" y="88.0" width="10.5" height="2.5" fill="rgb(92,15,74)"/><rect x="90.0" y="90.2" width="10.5" height="2.5" fill="rgb(141,20,109)"/><rect x="90.0" y="92.4" width="10.5" height="2.5" fill="#140d11"/><rect x="90.0" y="94.6" width="10.5" height="2.5" fill="#140d11"/><rect x="90.0" y="96.8" width="10.5" height="2.5" fill="#140d11"/></svg>
<svg style="position:absolute;left:1103px;top:686px;z-index:1" width="100" height="100" viewBox="0 0 100 100"><rect width="100" height="100" fill="#120c10"/><rect x="0.0" y="0.0" width="25.5" height="2.3" fill="#140d11"/><rect x="0.0" y="2.0" width="25.5" height="2.3" fill="rgb(82,15,67)"/><rect x="0.0" y="4.0" width="25.5" height="2.3" fill="#140d11"/><rect x="0.0" y="6.0" width="25.5" height="2.3" fill="rgb(56,12,49)"/><rect x="0.0" y="8.0" width="25.5" height="2.3" fill="#140d11"/><rect x="0.0" y="10.0" width="25.5" height="2.3" fill="rgb(111,17,88)"/><rect x="0.0" y="12.0" width="25.5" height="2.3" fill="rgb(74,14,61)"/><rect x="0.0" y="14.0" width="25.5" height="2.3" fill="rgb(86,15,70)"/><rect x="0.0" y="16.0" width="25.5" height="2.3" fill="rgb(98,16,78)"/><rect x="0.0" y="18.0" width="25.5" height="2.3" fill="rgb(89,15,72)"/><rect x="0.0" y="20.0" width="25.5" height="2.3" fill="rgb(77,14,64)"/><rect x="0.0" y="22.0" width="25.5" height="2.3" fill="rgb(70,13,58)"/><rect x="0.0" y="24.0" width="25.5" height="2.3" fill="rgb(91,15,74)"/><rect x="0.0" y="26.0" width="25.5" height="2.3" fill="#140d11"/><rect x="0.0" y="28.0" width="25.5" height="2.3" fill="rgb(78,14,64)"/><rect x="0.0" y="30.0" width="25.5" height="2.3" fill="rgb(196,25,148)"/><rect x="0.0" y="32.0" width="25.5" height="2.3" fill="#140d11"/><rect x="0.0" y="34.0" width="25.5" height="2.3" fill="rgb(73,14,61)"/><rect x="0.0" y="36.0" width="25.5" height="2.3" fill="rgb(85,15,69)"/><rect x="0.0" y="38.0" width="25.5" height="2.3" fill="#140d11"/><rect x="0.0" y="40.0" width="25.5" height="2.3" fill="#140d11"/><rect x="0.0" y="42.0" width="25.5" height="2.3" fill="rgb(59,12,51)"/><rect x="0.0" y="44.0" width="25.5" height="2.3" fill="rgb(90,15,72)"/><rect x="0.0" y="46.0" width="25.5" height="2.3" fill="#140d11"/><rect x="0.0" y="48.0" width="25.5" height="2.3" fill="rgb(60,12,51)"/><rect x="0.0" y="50.0" width="25.5" height="2.3" fill="rgb(18,106,35)"/><rect x="0.0" y="52.0" width="25.5" height="2.3" fill="#140d11"/><rect x="0.0" y="54.0" width="25.5" height="2.3" fill="#140d11"/><rect x="0.0" y="56.0" width="25.5" height="2.3" fill="rgb(16,55,24)"/><rect x="0.0" y="58.0" width="25.5" height="2.3" fill="rgb(16,62,26)"/><rect x="0.0" y="60.0" width="25.5" height="2.3" fill="#140d11"/><rect x="0.0" y="62.0" width="25.5" height="2.3" fill="rgb(17,70,28)"/><rect x="0.0" y="64.0" width="25.5" height="2.3" fill="rgb(78,14,64)"/><rect x="0.0" y="66.0" width="25.5" height="2.3" fill="#140d11"/><rect x="0.0" y="68.0" width="25.5" height="2.3" fill="#140d11"/><rect x="0.0" y="70.0" width="25.5" height="2.3" fill="#140d11"/><rect x="0.0" y="72.0" width="25.5" height="2.3" fill="rgb(18,104,35)"/><rect x="0.0" y="74.0" width="25.5" height="2.3" fill="#140d11"/><rect x="0.0" y="76.0" width="25.5" height="2.3" fill="#140d11"/><rect x="0.0" y="78.0" width="25.5" height="2.3" fill="#140d11"/><rect x="0.0" y="80.0" width="25.5" height="2.3" fill="rgb(16,59,25)"/><rect x="0.0" y="82.0" width="25.5" height="2.3" fill="#140d11"/><rect x="0.0" y="84.0" width="25.5" height="2.3" fill="#140d11"/><rect x="0.0" y="86.0" width="25.5" height="2.3" fill="rgb(20,140,43)"/><rect x="0.0" y="88.0" width="25.5" height="2.3" fill="rgb(17,73,28)"/><rect x="0.0" y="90.0" width="25.5" height="2.3" fill="rgb(16,51,23)"/><rect x="0.0" y="92.0" width="25.5" height="2.3" fill="rgb(16,56,24)"/><rect x="0.0" y="94.0" width="25.5" height="2.3" fill="#140d11"/><rect x="0.0" y="96.0" width="25.5" height="2.3" fill="#140d11"/><rect x="0.0" y="98.0" width="25.5" height="2.3" fill="rgb(16,64,26)"/><rect x="25.0" y="0.0" width="25.5" height="2.3" fill="rgb(150,21,115)"/><rect x="25.0" y="2.0" width="25.5" height="2.3" fill="rgb(56,12,49)"/><rect x="25.0" y="4.0" width="25.5" height="2.3" fill="rgb(132,19,103)"/><rect x="25.0" y="6.0" width="25.5" height="2.3" fill="rgb(61,12,52)"/><rect x="25.0" y="8.0" width="25.5" height="2.3" fill="rgb(105,17,84)"/><rect x="25.0" y="10.0" width="25.5" height="2.3" fill="#140d11"/><rect x="25.0" y="12.0" width="25.5" height="2.3" fill="#140d11"/><rect x="25.0" y="14.0" width="25.5" height="2.3" fill="rgb(82,15,67)"/><rect x="25.0" y="16.0" width="25.5" height="2.3" fill="rgb(139,20,108)"/><rect x="25.0" y="18.0" width="25.5" height="2.3" fill="rgb(92,15,74)"/><rect x="25.0" y="20.0" width="25.5" height="2.3" fill="rgb(66,13,56)"/><rect x="25.0" y="22.0" width="25.5" height="2.3" fill="rgb(100,16,80)"/><rect x="25.0" y="24.0" width="25.5" height="2.3" fill="rgb(56,12,48)"/><rect x="25.0" y="26.0" width="25.5" height="2.3" fill="#140d11"/><rect x="25.0" y="28.0" width="25.5" height="2.3" fill="rgb(66,13,56)"/><rect x="25.0" y="30.0" width="25.5" height="2.3" fill="rgb(79,14,65)"/><rect x="25.0" y="32.0" width="25.5" height="2.3" fill="#140d11"/><rect x="25.0" y="34.0" width="25.5" height="2.3" fill="rgb(74,14,62)"/><rect x="25.0" y="36.0" width="25.5" height="2.3" fill="#140d11"/><rect x="25.0" y="38.0" width="25.5" height="2.3" fill="rgb(75,14,62)"/><rect x="25.0" y="40.0" width="25.5" height="2.3" fill="#140d11"/><rect x="25.0" y="42.0" width="25.5" height="2.3" fill="rgb(74,14,61)"/><rect x="25.0" y="44.0" width="25.5" height="2.3" fill="rgb(103,17,82)"/><rect x="25.0" y="46.0" width="25.5" height="2.3" fill="#140d11"/><rect x="25.0" y="48.0" width="25.5" height="2.3" fill="#140d11"/><rect x="25.0" y="50.0" width="25.5" height="2.3" fill="#140d11"/><rect x="25.0" y="52.0" width="25.5" height="2.3" fill="#140d11"/><rect x="25.0" y="54.0" width="25.5" height="2.3" fill="rgb(17,75,29)"/><rect x="25.0" y="56.0" width="25.5" height="2.3" fill="#140d11"/><rect x="25.0" y="58.0" width="25.5" height="2.3" fill="rgb(16,50,23)"/><rect x="25.0" y="60.0" width="25.5" height="2.3" fill="#140d11"/><rect x="25.0" y="62.0" width="25.5" height="2.3" fill="#140d11"/><rect x="25.0" y="64.0" width="25.5" height="2.3" fill="rgb(17,77,29)"/><rect x="25.0" y="66.0" width="25.5" height="2.3" fill="#140d11"/><rect x="25.0" y="68.0" width="25.5" height="2.3" fill="rgb(17,72,28)"/><rect x="25.0" y="70.0" width="25.5" height="2.3" fill="#140d11"/><rect x="25.0" y="72.0" width="25.5" height="2.3" fill="rgb(16,55,24)"/><rect x="25.0" y="74.0" width="25.5" height="2.3" fill="#140d11"/><rect x="25.0" y="76.0" width="25.5" height="2.3" fill="#140d11"/><rect x="25.0" y="78.0" width="25.5" height="2.3" fill="#140d11"/><rect x="25.0" y="80.0" width="25.5" height="2.3" fill="rgb(16,64,26)"/><rect x="25.0" y="82.0" width="25.5" height="2.3" fill="rgb(20,130,41)"/><rect x="25.0" y="84.0" width="25.5" height="2.3" fill="rgb(18,87,31)"/><rect x="25.0" y="86.0" width="25.5" height="2.3" fill="rgb(17,79,30)"/><rect x="25.0" y="88.0" width="25.5" height="2.3" fill="rgb(17,69,27)"/><rect x="25.0" y="90.0" width="25.5" height="2.3" fill="#140d11"/><rect x="25.0" y="92.0" width="25.5" height="2.3" fill="rgb(17,71,28)"/><rect x="25.0" y="94.0" width="25.5" height="2.3" fill="rgb(20,129,41)"/><rect x="25.0" y="96.0" width="25.5" height="2.3" fill="#140d11"/><rect x="25.0" y="98.0" width="25.5" height="2.3" fill="rgb(17,79,29)"/><rect x="50.0" y="0.0" width="25.5" height="2.3" fill="rgb(17,74,28)"/><rect x="50.0" y="2.0" width="25.5" height="2.3" fill="rgb(16,51,23)"/><rect x="50.0" y="4.0" width="25.5" height="2.3" fill="rgb(17,66,27)"/><rect x="50.0" y="6.0" width="25.5" height="2.3" fill="rgb(18,88,31)"/><rect x="50.0" y="8.0" width="25.5" height="2.3" fill="rgb(19,122,39)"/><rect x="50.0" y="10.0" width="25.5" height="2.3" fill="rgb(17,85,31)"/><rect x="50.0" y="12.0" width="25.5" height="2.3" fill="rgb(18,99,34)"/><rect x="50.0" y="14.0" width="25.5" height="2.3" fill="rgb(16,53,24)"/><rect x="50.0" y="16.0" width="25.5" height="2.3" fill="rgb(17,68,27)"/><rect x="50.0" y="18.0" width="25.5" height="2.3" fill="#140d11"/><rect x="50.0" y="20.0" width="25.5" height="2.3" fill="rgb(16,52,23)"/><rect x="50.0" y="22.0" width="25.5" height="2.3" fill="#140d11"/><rect x="50.0" y="24.0" width="25.5" height="2.3" fill="rgb(16,64,26)"/><rect x="50.0" y="26.0" width="25.5" height="2.3" fill="rgb(18,91,32)"/><rect x="50.0" y="28.0" width="25.5" height="2.3" fill="#140d11"/><rect x="50.0" y="30.0" width="25.5" height="2.3" fill="rgb(16,51,23)"/><rect x="50.0" y="32.0" width="25.5" height="2.3" fill="rgb(16,62,26)"/><rect x="50.0" y="34.0" width="25.5" height="2.3" fill="#140d11"/><rect x="50.0" y="36.0" width="25.5" height="2.3" fill="rgb(17,73,28)"/><rect x="50.0" y="38.0" width="25.5" height="2.3" fill="rgb(16,51,23)"/><rect x="50.0" y="40.0" width="25.5" height="2.3" fill="#140d11"/><rect x="50.0" y="42.0" width="25.5" height="2.3" fill="#140d11"/><rect x="50.0" y="44.0" width="25.5" height="2.3" fill="rgb(17,66,27)"/><rect x="50.0" y="46.0" width="25.5" height="2.3" fill="#140d11"/><rect x="50.0" y="48.0" width="25.5" height="2.3" fill="#140d11"/><rect x="50.0" y="50.0" width="25.5" height="2.3" fill="rgb(58,12,50)"/><rect x="50.0" y="52.0" width="25.5" height="2.3" fill="rgb(59,12,51)"/><rect x="50.0" y="54.0" width="25.5" height="2.3" fill="rgb(126,19,98)"/><rect x="50.0" y="56.0" width="25.5" height="2.3" fill="#140d11"/><rect x="50.0" y="58.0" width="25.5" height="2.3" fill="rgb(98,16,79)"/><rect x="50.0" y="60.0" width="25.5" height="2.3" fill="#140d11"/><rect x="50.0" y="62.0" width="25.5" height="2.3" fill="rgb(107,17,85)"/><rect x="50.0" y="64.0" width="25.5" height="2.3" fill="rgb(88,15,71)"/><rect x="50.0" y="66.0" width="25.5" height="2.3" fill="rgb(60,12,51)"/><rect x="50.0" y="68.0" width="25.5" height="2.3" fill="rgb(79,14,65)"/><rect x="50.0" y="70.0" width="25.5" height="2.3" fill="rgb(89,15,72)"/><rect x="50.0" y="72.0" width="25.5" height="2.3" fill="#140d11"/><rect x="50.0" y="74.0" width="25.5" height="2.3" fill="#140d11"/><rect x="50.0" y="76.0" width="25.5" height="2.3" fill="#140d11"/><rect x="50.0" y="78.0" width="25.5" height="2.3" fill="rgb(76,14,63)"/><rect x="50.0" y="80.0" width="25.5" height="2.3" fill="rgb(94,16,76)"/><rect x="50.0" y="82.0" width="25.5" height="2.3" fill="rgb(81,14,66)"/><rect x="50.0" y="84.0" width="25.5" height="2.3" fill="rgb(83,15,67)"/><rect x="50.0" y="86.0" width="25.5" height="2.3" fill="rgb(66,13,55)"/><rect x="50.0" y="88.0" width="25.5" height="2.3" fill="#140d11"/><rect x="50.0" y="90.0" width="25.5" height="2.3" fill="rgb(70,13,59)"/><rect x="50.0" y="92.0" width="25.5" height="2.3" fill="rgb(92,15,74)"/><rect x="50.0" y="94.0" width="25.5" height="2.3" fill="rgb(86,15,70)"/><rect x="50.0" y="96.0" width="25.5" height="2.3" fill="#140d11"/><rect x="50.0" y="98.0" width="25.5" height="2.3" fill="rgb(60,12,51)"/><rect x="75.0" y="0.0" width="25.5" height="2.3" fill="#140d11"/><rect x="75.0" y="2.0" width="25.5" height="2.3" fill="#140d11"/><rect x="75.0" y="4.0" width="25.5" height="2.3" fill="#140d11"/><rect x="75.0" y="6.0" width="25.5" height="2.3" fill="#140d11"/><rect x="75.0" y="8.0" width="25.5" height="2.3" fill="#140d11"/><rect x="75.0" y="10.0" width="25.5" height="2.3" fill="#140d11"/><rect x="75.0" y="12.0" width="25.5" height="2.3" fill="rgb(18,94,33)"/><rect x="75.0" y="14.0" width="25.5" height="2.3" fill="rgb(24,221,61)"/><rect x="75.0" y="16.0" width="25.5" height="2.3" fill="rgb(25,230,63)"/><rect x="75.0" y="18.0" width="25.5" height="2.3" fill="rgb(21,162,48)"/><rect x="75.0" y="20.0" width="25.5" height="2.3" fill="rgb(25,230,63)"/><rect x="75.0" y="22.0" width="25.5" height="2.3" fill="rgb(25,230,63)"/><rect x="75.0" y="24.0" width="25.5" height="2.3" fill="rgb(24,229,62)"/><rect x="75.0" y="26.0" width="25.5" height="2.3" fill="rgb(25,230,63)"/><rect x="75.0" y="28.0" width="25.5" height="2.3" fill="rgb(21,163,48)"/><rect x="75.0" y="30.0" width="25.5" height="2.3" fill="rgb(21,164,48)"/><rect x="75.0" y="32.0" width="25.5" height="2.3" fill="rgb(24,219,60)"/><rect x="75.0" y="34.0" width="25.5" height="2.3" fill="rgb(23,190,54)"/><rect x="75.0" y="36.0" width="25.5" height="2.3" fill="rgb(22,173,50)"/><rect x="75.0" y="38.0" width="25.5" height="2.3" fill="rgb(25,230,63)"/><rect x="75.0" y="40.0" width="25.5" height="2.3" fill="#140d11"/><rect x="75.0" y="42.0" width="25.5" height="2.3" fill="#140d11"/><rect x="75.0" y="44.0" width="25.5" height="2.3" fill="#140d11"/><rect x="75.0" y="46.0" width="25.5" height="2.3" fill="#140d11"/><rect x="75.0" y="48.0" width="25.5" height="2.3" fill="#140d11"/><rect x="75.0" y="50.0" width="25.5" height="2.3" fill="#140d11"/><rect x="75.0" y="52.0" width="25.5" height="2.3" fill="#140d11"/><rect x="75.0" y="54.0" width="25.5" height="2.3" fill="rgb(219,28,165)"/><rect x="75.0" y="56.0" width="25.5" height="2.3" fill="rgb(235,29,176)"/><rect x="75.0" y="58.0" width="25.5" height="2.3" fill="rgb(201,26,152)"/><rect x="75.0" y="60.0" width="25.5" height="2.3" fill="rgb(240,30,180)"/><rect x="75.0" y="62.0" width="25.5" height="2.3" fill="rgb(240,30,180)"/><rect x="75.0" y="64.0" width="25.5" height="2.3" fill="rgb(240,30,180)"/><rect x="75.0" y="66.0" width="25.5" height="2.3" fill="rgb(169,23,129)"/><rect x="75.0" y="68.0" width="25.5" height="2.3" fill="rgb(211,27,159)"/><rect x="75.0" y="70.0" width="25.5" height="2.3" fill="rgb(132,19,103)"/><rect x="75.0" y="72.0" width="25.5" height="2.3" fill="rgb(157,22,121)"/><rect x="75.0" y="74.0" width="25.5" height="2.3" fill="rgb(240,30,180)"/><rect x="75.0" y="76.0" width="25.5" height="2.3" fill="rgb(152,21,117)"/><rect x="75.0" y="78.0" width="25.5" height="2.3" fill="rgb(85,15,69)"/><rect x="75.0" y="80.0" width="25.5" height="2.3" fill="rgb(115,18,91)"/><rect x="75.0" y="82.0" width="25.5" height="2.3" fill="rgb(110,17,87)"/><rect x="75.0" y="84.0" width="25.5" height="2.3" fill="rgb(150,21,116)"/><rect x="75.0" y="86.0" width="25.5" height="2.3" fill="rgb(81,14,66)"/><rect x="75.0" y="88.0" width="25.5" height="2.3" fill="rgb(96,16,77)"/><rect x="75.0" y="90.0" width="25.5" height="2.3" fill="rgb(88,15,71)"/><rect x="75.0" y="92.0" width="25.5" height="2.3" fill="rgb(92,15,74)"/><rect x="75.0" y="94.0" width="25.5" height="2.3" fill="rgb(143,20,110)"/><rect x="75.0" y="96.0" width="25.5" height="2.3" fill="rgb(210,27,158)"/><rect x="75.0" y="98.0" width="25.5" height="2.3" fill="rgb(115,18,90)"/></svg>
<svg style="position:absolute;left:1103px;top:949px;z-index:1" width="100" height="72" viewBox="0 0 100 72"><rect width="100" height="100" fill="#120c10"/><rect x="0.0" y="0.0" width="6.8" height="2.8" fill="#140d11"/><rect x="0.0" y="2.5" width="6.8" height="2.8" fill="rgb(18,97,33)"/><rect x="0.0" y="5.0" width="6.8" height="2.8" fill="rgb(77,14,64)"/><rect x="0.0" y="7.5" width="6.8" height="2.8" fill="rgb(17,76,29)"/><rect x="0.0" y="10.0" width="6.8" height="2.8" fill="#140d11"/><rect x="0.0" y="12.5" width="6.8" height="2.8" fill="#140d11"/><rect x="0.0" y="15.0" width="6.8" height="2.8" fill="rgb(21,160,47)"/><rect x="0.0" y="17.5" width="6.8" height="2.8" fill="#140d11"/><rect x="0.0" y="20.0" width="6.8" height="2.8" fill="#140d11"/><rect x="0.0" y="22.5" width="6.8" height="2.8" fill="rgb(16,57,25)"/><rect x="0.0" y="25.0" width="6.8" height="2.8" fill="rgb(18,87,31)"/><rect x="0.0" y="27.5" width="6.8" height="2.8" fill="#140d11"/><rect x="0.0" y="30.0" width="6.8" height="2.8" fill="#140d11"/><rect x="0.0" y="32.5" width="6.8" height="2.8" fill="rgb(81,14,66)"/><rect x="0.0" y="35.0" width="6.8" height="2.8" fill="#140d11"/><rect x="0.0" y="37.5" width="6.8" height="2.8" fill="#140d11"/><rect x="0.0" y="40.0" width="6.8" height="2.8" fill="rgb(111,17,88)"/><rect x="0.0" y="42.5" width="6.8" height="2.8" fill="rgb(128,19,100)"/><rect x="0.0" y="45.0" width="6.8" height="2.8" fill="rgb(140,20,108)"/><rect x="0.0" y="47.5" width="6.8" height="2.8" fill="#140d11"/><rect x="0.0" y="50.0" width="6.8" height="2.8" fill="rgb(77,14,63)"/><rect x="0.0" y="52.5" width="6.8" height="2.8" fill="rgb(88,15,72)"/><rect x="0.0" y="55.0" width="6.8" height="2.8" fill="rgb(59,12,51)"/><rect x="0.0" y="57.5" width="6.8" height="2.8" fill="rgb(190,25,144)"/><rect x="0.0" y="60.0" width="6.8" height="2.8" fill="rgb(70,13,58)"/><rect x="0.0" y="62.5" width="6.8" height="2.8" fill="#140d11"/><rect x="0.0" y="65.0" width="6.8" height="2.8" fill="#140d11"/><rect x="0.0" y="67.5" width="6.8" height="2.8" fill="rgb(137,20,106)"/><rect x="0.0" y="70.0" width="6.8" height="2.8" fill="rgb(95,16,76)"/><rect x="0.0" y="72.5" width="6.8" height="2.8" fill="rgb(240,30,180)"/><rect x="0.0" y="75.0" width="6.8" height="2.8" fill="rgb(104,17,83)"/><rect x="0.0" y="77.5" width="6.8" height="2.8" fill="rgb(240,30,180)"/><rect x="0.0" y="80.0" width="6.8" height="2.8" fill="rgb(199,26,151)"/><rect x="0.0" y="82.5" width="6.8" height="2.8" fill="#140d11"/><rect x="0.0" y="85.0" width="6.8" height="2.8" fill="rgb(240,30,180)"/><rect x="0.0" y="87.5" width="6.8" height="2.8" fill="#140d11"/><rect x="0.0" y="90.0" width="6.8" height="2.8" fill="#140d11"/><rect x="0.0" y="92.5" width="6.8" height="2.8" fill="rgb(88,15,71)"/><rect x="0.0" y="95.0" width="6.8" height="2.8" fill="#140d11"/><rect x="0.0" y="97.5" width="6.8" height="2.8" fill="#140d11"/><rect x="6.2" y="0.0" width="6.8" height="2.8" fill="rgb(17,80,30)"/><rect x="6.2" y="2.5" width="6.8" height="2.8" fill="#140d11"/><rect x="6.2" y="5.0" width="6.8" height="2.8" fill="#140d11"/><rect x="6.2" y="7.5" width="6.8" height="2.8" fill="#140d11"/><rect x="6.2" y="10.0" width="6.8" height="2.8" fill="rgb(82,14,67)"/><rect x="6.2" y="12.5" width="6.8" height="2.8" fill="#140d11"/><rect x="6.2" y="15.0" width="6.8" height="2.8" fill="rgb(67,13,56)"/><rect x="6.2" y="17.5" width="6.8" height="2.8" fill="rgb(17,82,30)"/><rect x="6.2" y="20.0" width="6.8" height="2.8" fill="rgb(165,22,126)"/><rect x="6.2" y="22.5" width="6.8" height="2.8" fill="rgb(90,15,73)"/><rect x="6.2" y="25.0" width="6.8" height="2.8" fill="rgb(79,14,65)"/><rect x="6.2" y="27.5" width="6.8" height="2.8" fill="rgb(190,25,144)"/><rect x="6.2" y="30.0" width="6.8" height="2.8" fill="rgb(21,161,47)"/><rect x="6.2" y="32.5" width="6.8" height="2.8" fill="rgb(228,28,171)"/><rect x="6.2" y="35.0" width="6.8" height="2.8" fill="#140d11"/><rect x="6.2" y="37.5" width="6.8" height="2.8" fill="#140d11"/><rect x="6.2" y="40.0" width="6.8" height="2.8" fill="rgb(20,135,42)"/><rect x="6.2" y="42.5" width="6.8" height="2.8" fill="rgb(178,24,136)"/><rect x="6.2" y="45.0" width="6.8" height="2.8" fill="rgb(17,82,30)"/><rect x="6.2" y="47.5" width="6.8" height="2.8" fill="rgb(63,13,53)"/><rect x="6.2" y="50.0" width="6.8" height="2.8" fill="rgb(75,14,62)"/><rect x="6.2" y="52.5" width="6.8" height="2.8" fill="rgb(119,18,94)"/><rect x="6.2" y="55.0" width="6.8" height="2.8" fill="#140d11"/><rect x="6.2" y="57.5" width="6.8" height="2.8" fill="rgb(167,23,128)"/><rect x="6.2" y="60.0" width="6.8" height="2.8" fill="rgb(70,13,58)"/><rect x="6.2" y="62.5" width="6.8" height="2.8" fill="#140d11"/><rect x="6.2" y="65.0" width="6.8" height="2.8" fill="rgb(17,84,30)"/><rect x="6.2" y="67.5" width="6.8" height="2.8" fill="rgb(240,30,180)"/><rect x="6.2" y="70.0" width="6.8" height="2.8" fill="rgb(16,60,25)"/><rect x="6.2" y="72.5" width="6.8" height="2.8" fill="#140d11"/><rect x="6.2" y="75.0" width="6.8" height="2.8" fill="rgb(102,16,81)"/><rect x="6.2" y="77.5" width="6.8" height="2.8" fill="#140d11"/><rect x="6.2" y="80.0" width="6.8" height="2.8" fill="rgb(101,16,80)"/><rect x="6.2" y="82.5" width="6.8" height="2.8" fill="rgb(17,69,27)"/><rect x="6.2" y="85.0" width="6.8" height="2.8" fill="#140d11"/><rect x="6.2" y="87.5" width="6.8" height="2.8" fill="rgb(80,14,66)"/><rect x="6.2" y="90.0" width="6.8" height="2.8" fill="rgb(81,14,66)"/><rect x="6.2" y="92.5" width="6.8" height="2.8" fill="rgb(79,14,65)"/><rect x="6.2" y="95.0" width="6.8" height="2.8" fill="rgb(77,14,63)"/><rect x="6.2" y="97.5" width="6.8" height="2.8" fill="rgb(140,20,108)"/><rect x="12.5" y="0.0" width="6.8" height="2.8" fill="rgb(22,178,51)"/><rect x="12.5" y="2.5" width="6.8" height="2.8" fill="rgb(170,23,130)"/><rect x="12.5" y="5.0" width="6.8" height="2.8" fill="rgb(240,30,180)"/><rect x="12.5" y="7.5" width="6.8" height="2.8" fill="#140d11"/><rect x="12.5" y="10.0" width="6.8" height="2.8" fill="#140d11"/><rect x="12.5" y="12.5" width="6.8" height="2.8" fill="#140d11"/><rect x="12.5" y="15.0" width="6.8" height="2.8" fill="#140d11"/><rect x="12.5" y="17.5" width="6.8" height="2.8" fill="#140d11"/><rect x="12.5" y="20.0" width="6.8" height="2.8" fill="#140d11"/><rect x="12.5" y="22.5" width="6.8" height="2.8" fill="rgb(17,74,28)"/><rect x="12.5" y="25.0" width="6.8" height="2.8" fill="#140d11"/><rect x="12.5" y="27.5" width="6.8" height="2.8" fill="#140d11"/><rect x="12.5" y="30.0" width="6.8" height="2.8" fill="rgb(21,165,48)"/><rect x="12.5" y="32.5" width="6.8" height="2.8" fill="#140d11"/><rect x="12.5" y="35.0" width="6.8" height="2.8" fill="rgb(81,14,67)"/><rect x="12.5" y="37.5" width="6.8" height="2.8" fill="rgb(23,208,58)"/><rect x="12.5" y="40.0" width="6.8" height="2.8" fill="rgb(16,60,25)"/><rect x="12.5" y="42.5" width="6.8" height="2.8" fill="#140d11"/><rect x="12.5" y="45.0" width="6.8" height="2.8" fill="rgb(97,16,78)"/><rect x="12.5" y="47.5" width="6.8" height="2.8" fill="#140d11"/><rect x="12.5" y="50.0" width="6.8" height="2.8" fill="rgb(135,20,105)"/><rect x="12.5" y="52.5" width="6.8" height="2.8" fill="rgb(159,22,122)"/><rect x="12.5" y="55.0" width="6.8" height="2.8" fill="rgb(185,24,141)"/><rect x="12.5" y="57.5" width="6.8" height="2.8" fill="rgb(104,17,83)"/><rect x="12.5" y="60.0" width="6.8" height="2.8" fill="#140d11"/><rect x="12.5" y="62.5" width="6.8" height="2.8" fill="rgb(98,16,78)"/><rect x="12.5" y="65.0" width="6.8" height="2.8" fill="rgb(203,26,153)"/><rect x="12.5" y="67.5" width="6.8" height="2.8" fill="#140d11"/><rect x="12.5" y="70.0" width="6.8" height="2.8" fill="rgb(60,12,51)"/><rect x="12.5" y="72.5" width="6.8" height="2.8" fill="#140d11"/><rect x="12.5" y="75.0" width="6.8" height="2.8" fill="#140d11"/><rect x="12.5" y="77.5" width="6.8" height="2.8" fill="rgb(76,14,63)"/><rect x="12.5" y="80.0" width="6.8" height="2.8" fill="rgb(74,14,62)"/><rect x="12.5" y="82.5" width="6.8" height="2.8" fill="rgb(67,13,56)"/><rect x="12.5" y="85.0" width="6.8" height="2.8" fill="rgb(167,23,128)"/><rect x="12.5" y="87.5" width="6.8" height="2.8" fill="#140d11"/><rect x="12.5" y="90.0" width="6.8" height="2.8" fill="rgb(16,50,23)"/><rect x="12.5" y="92.5" width="6.8" height="2.8" fill="#140d11"/><rect x="12.5" y="95.0" width="6.8" height="2.8" fill="rgb(82,14,67)"/><rect x="12.5" y="97.5" width="6.8" height="2.8" fill="rgb(83,15,68)"/><rect x="18.8" y="0.0" width="6.8" height="2.8" fill="rgb(66,13,56)"/><rect x="18.8" y="2.5" width="6.8" height="2.8" fill="rgb(68,13,57)"/><rect x="18.8" y="5.0" width="6.8" height="2.8" fill="#140d11"/><rect x="18.8" y="7.5" width="6.8" height="2.8" fill="rgb(71,13,59)"/><rect x="18.8" y="10.0" width="6.8" height="2.8" fill="#140d11"/><rect x="18.8" y="12.5" width="6.8" height="2.8" fill="rgb(135,20,105)"/><rect x="18.8" y="15.0" width="6.8" height="2.8" fill="#140d11"/><rect x="18.8" y="17.5" width="6.8" height="2.8" fill="#140d11"/><rect x="18.8" y="20.0" width="6.8" height="2.8" fill="rgb(95,16,76)"/><rect x="18.8" y="22.5" width="6.8" height="2.8" fill="rgb(215,27,162)"/><rect x="18.8" y="25.0" width="6.8" height="2.8" fill="#140d11"/><rect x="18.8" y="27.5" width="6.8" height="2.8" fill="rgb(17,85,31)"/><rect x="18.8" y="30.0" width="6.8" height="2.8" fill="rgb(63,13,53)"/><rect x="18.8" y="32.5" width="6.8" height="2.8" fill="#140d11"/><rect x="18.8" y="35.0" width="6.8" height="2.8" fill="#140d11"/><rect x="18.8" y="37.5" width="6.8" height="2.8" fill="rgb(16,52,24)"/><rect x="18.8" y="40.0" width="6.8" height="2.8" fill="rgb(76,14,63)"/><rect x="18.8" y="42.5" width="6.8" height="2.8" fill="rgb(17,75,29)"/><rect x="18.8" y="45.0" width="6.8" height="2.8" fill="#140d11"/><rect x="18.8" y="47.5" width="6.8" height="2.8" fill="rgb(17,71,28)"/><rect x="18.8" y="50.0" width="6.8" height="2.8" fill="rgb(62,13,53)"/><rect x="18.8" y="52.5" width="6.8" height="2.8" fill="rgb(81,14,66)"/><rect x="18.8" y="55.0" width="6.8" height="2.8" fill="rgb(206,26,156)"/><rect x="18.8" y="57.5" width="6.8" height="2.8" fill="rgb(121,18,95)"/><rect x="18.8" y="60.0" width="6.8" height="2.8" fill="rgb(84,15,68)"/><rect x="18.8" y="62.5" width="6.8" height="2.8" fill="#140d11"/><rect x="18.8" y="65.0" width="6.8" height="2.8" fill="#140d11"/><rect x="18.8" y="67.5" width="6.8" height="2.8" fill="rgb(122,18,96)"/><rect x="18.8" y="70.0" width="6.8" height="2.8" fill="#140d11"/><rect x="18.8" y="72.5" width="6.8" height="2.8" fill="#140d11"/><rect x="18.8" y="75.0" width="6.8" height="2.8" fill="rgb(75,14,62)"/><rect x="18.8" y="77.5" width="6.8" height="2.8" fill="rgb(98,16,79)"/><rect x="18.8" y="80.0" width="6.8" height="2.8" fill="rgb(94,16,76)"/><rect x="18.8" y="82.5" width="6.8" height="2.8" fill="#140d11"/><rect x="18.8" y="85.0" width="6.8" height="2.8" fill="#140d11"/><rect x="18.8" y="87.5" width="6.8" height="2.8" fill="rgb(145,21,112)"/><rect x="18.8" y="90.0" width="6.8" height="2.8" fill="#140d11"/><rect x="18.8" y="92.5" width="6.8" height="2.8" fill="rgb(102,16,81)"/><rect x="18.8" y="95.0" width="6.8" height="2.8" fill="rgb(127,19,99)"/><rect x="18.8" y="97.5" width="6.8" height="2.8" fill="#140d11"/><rect x="25.0" y="0.0" width="6.8" height="2.8" fill="rgb(16,63,26)"/><rect x="25.0" y="2.5" width="6.8" height="2.8" fill="rgb(62,13,53)"/><rect x="25.0" y="5.0" width="6.8" height="2.8" fill="#140d11"/><rect x="25.0" y="7.5" width="6.8" height="2.8" fill="#140d11"/><rect x="25.0" y="10.0" width="6.8" height="2.8" fill="rgb(57,12,49)"/><rect x="25.0" y="12.5" width="6.8" height="2.8" fill="#140d11"/><rect x="25.0" y="15.0" width="6.8" height="2.8" fill="rgb(16,53,24)"/><rect x="25.0" y="17.5" width="6.8" height="2.8" fill="rgb(157,22,120)"/><rect x="25.0" y="20.0" width="6.8" height="2.8" fill="#140d11"/><rect x="25.0" y="22.5" width="6.8" height="2.8" fill="rgb(16,57,25)"/><rect x="25.0" y="25.0" width="6.8" height="2.8" fill="#140d11"/><rect x="25.0" y="27.5" width="6.8" height="2.8" fill="rgb(112,17,88)"/><rect x="25.0" y="30.0" width="6.8" height="2.8" fill="#140d11"/><rect x="25.0" y="32.5" width="6.8" height="2.8" fill="rgb(72,14,60)"/><rect x="25.0" y="35.0" width="6.8" height="2.8" fill="#140d11"/><rect x="25.0" y="37.5" width="6.8" height="2.8" fill="#140d11"/><rect x="25.0" y="40.0" width="6.8" height="2.8" fill="#140d11"/><rect x="25.0" y="42.5" width="6.8" height="2.8" fill="rgb(65,13,55)"/><rect x="25.0" y="45.0" width="6.8" height="2.8" fill="#140d11"/><rect x="25.0" y="47.5" width="6.8" height="2.8" fill="rgb(16,65,26)"/><rect x="25.0" y="50.0" width="6.8" height="2.8" fill="rgb(142,20,110)"/><rect x="25.0" y="52.5" width="6.8" height="2.8" fill="#140d11"/><rect x="25.0" y="55.0" width="6.8" height="2.8" fill="#140d11"/><rect x="25.0" y="57.5" width="6.8" height="2.8" fill="rgb(85,15,69)"/><rect x="25.0" y="60.0" width="6.8" height="2.8" fill="rgb(20,134,42)"/><rect x="25.0" y="62.5" width="6.8" height="2.8" fill="rgb(59,12,51)"/><rect x="25.0" y="65.0" width="6.8" height="2.8" fill="rgb(19,110,36)"/><rect x="25.0" y="67.5" width="6.8" height="2.8" fill="rgb(240,30,180)"/><rect x="25.0" y="70.0" width="6.8" height="2.8" fill="rgb(240,30,180)"/><rect x="25.0" y="72.5" width="6.8" height="2.8" fill="#140d11"/><rect x="25.0" y="75.0" width="6.8" height="2.8" fill="#140d11"/><rect x="25.0" y="77.5" width="6.8" height="2.8" fill="rgb(88,15,71)"/><rect x="25.0" y="80.0" width="6.8" height="2.8" fill="rgb(68,13,57)"/><rect x="25.0" y="82.5" width="6.8" height="2.8" fill="rgb(240,30,180)"/><rect x="25.0" y="85.0" width="6.8" height="2.8" fill="rgb(116,18,91)"/><rect x="25.0" y="87.5" width="6.8" height="2.8" fill="rgb(156,22,120)"/><rect x="25.0" y="90.0" width="6.8" height="2.8" fill="rgb(80,14,66)"/><rect x="25.0" y="92.5" width="6.8" height="2.8" fill="#140d11"/><rect x="25.0" y="95.0" width="6.8" height="2.8" fill="rgb(60,12,52)"/><rect x="25.0" y="97.5" width="6.8" height="2.8" fill="#140d11"/><rect x="31.2" y="0.0" width="6.8" height="2.8" fill="rgb(60,12,52)"/><rect x="31.2" y="2.5" width="6.8" height="2.8" fill="#140d11"/><rect x="31.2" y="5.0" width="6.8" height="2.8" fill="#140d11"/><rect x="31.2" y="7.5" width="6.8" height="2.8" fill="#140d11"/><rect x="31.2" y="10.0" width="6.8" height="2.8" fill="rgb(18,98,34)"/><rect x="31.2" y="12.5" width="6.8" height="2.8" fill="rgb(73,14,61)"/><rect x="31.2" y="15.0" width="6.8" height="2.8" fill="rgb(21,159,47)"/><rect x="31.2" y="17.5" width="6.8" height="2.8" fill="rgb(81,14,66)"/><rect x="31.2" y="20.0" width="6.8" height="2.8" fill="rgb(17,81,30)"/><rect x="31.2" y="22.5" width="6.8" height="2.8" fill="rgb(66,13,55)"/><rect x="31.2" y="25.0" width="6.8" height="2.8" fill="#140d11"/><rect x="31.2" y="27.5" width="6.8" height="2.8" fill="rgb(165,22,126)"/><rect x="31.2" y="30.0" width="6.8" height="2.8" fill="rgb(137,20,106)"/><rect x="31.2" y="32.5" width="6.8" height="2.8" fill="rgb(104,17,83)"/><rect x="31.2" y="35.0" width="6.8" height="2.8" fill="rgb(240,30,180)"/><rect x="31.2" y="37.5" width="6.8" height="2.8" fill="rgb(240,30,180)"/><rect x="31.2" y="40.0" width="6.8" height="2.8" fill="rgb(240,30,180)"/><rect x="31.2" y="42.5" width="6.8" height="2.8" fill="rgb(66,13,56)"/><rect x="31.2" y="45.0" width="6.8" height="2.8" fill="rgb(60,12,52)"/><rect x="31.2" y="47.5" width="6.8" height="2.8" fill="#140d11"/><rect x="31.2" y="50.0" width="6.8" height="2.8" fill="rgb(66,13,56)"/><rect x="31.2" y="52.5" width="6.8" height="2.8" fill="rgb(18,96,33)"/><rect x="31.2" y="55.0" width="6.8" height="2.8" fill="rgb(237,29,178)"/><rect x="31.2" y="57.5" width="6.8" height="2.8" fill="#140d11"/><rect x="31.2" y="60.0" width="6.8" height="2.8" fill="rgb(95,16,76)"/><rect x="31.2" y="62.5" width="6.8" height="2.8" fill="#140d11"/><rect x="31.2" y="65.0" width="6.8" height="2.8" fill="rgb(240,30,180)"/><rect x="31.2" y="67.5" width="6.8" height="2.8" fill="rgb(95,16,76)"/><rect x="31.2" y="70.0" width="6.8" height="2.8" fill="#140d11"/><rect x="31.2" y="72.5" width="6.8" height="2.8" fill="rgb(16,62,26)"/><rect x="31.2" y="75.0" width="6.8" height="2.8" fill="rgb(16,65,26)"/><rect x="31.2" y="77.5" width="6.8" height="2.8" fill="rgb(138,20,107)"/><rect x="31.2" y="80.0" width="6.8" height="2.8" fill="rgb(60,12,52)"/><rect x="31.2" y="82.5" width="6.8" height="2.8" fill="rgb(72,14,60)"/><rect x="31.2" y="85.0" width="6.8" height="2.8" fill="rgb(194,25,147)"/><rect x="31.2" y="87.5" width="6.8" height="2.8" fill="rgb(202,26,153)"/><rect x="31.2" y="90.0" width="6.8" height="2.8" fill="#140d11"/><rect x="31.2" y="92.5" width="6.8" height="2.8" fill="#140d11"/><rect x="31.2" y="95.0" width="6.8" height="2.8" fill="rgb(74,14,62)"/><rect x="31.2" y="97.5" width="6.8" height="2.8" fill="#140d11"/><rect x="37.5" y="0.0" width="6.8" height="2.8" fill="rgb(17,76,29)"/><rect x="37.5" y="2.5" width="6.8" height="2.8" fill="rgb(25,230,63)"/><rect x="37.5" y="5.0" width="6.8" height="2.8" fill="rgb(22,172,50)"/><rect x="37.5" y="7.5" width="6.8" height="2.8" fill="rgb(21,165,48)"/><rect x="37.5" y="10.0" width="6.8" height="2.8" fill="#140d11"/><rect x="37.5" y="12.5" width="6.8" height="2.8" fill="#140d11"/><rect x="37.5" y="15.0" width="6.8" height="2.8" fill="#140d11"/><rect x="37.5" y="17.5" width="6.8" height="2.8" fill="#140d11"/><rect x="37.5" y="20.0" width="6.8" height="2.8" fill="rgb(21,164,48)"/><rect x="37.5" y="22.5" width="6.8" height="2.8" fill="#140d11"/><rect x="37.5" y="25.0" width="6.8" height="2.8" fill="rgb(82,14,67)"/><rect x="37.5" y="27.5" width="6.8" height="2.8" fill="rgb(117,18,92)"/><rect x="37.5" y="30.0" width="6.8" height="2.8" fill="rgb(221,28,166)"/><rect x="37.5" y="32.5" width="6.8" height="2.8" fill="rgb(100,16,80)"/><rect x="37.5" y="35.0" width="6.8" height="2.8" fill="rgb(240,30,180)"/><rect x="37.5" y="37.5" width="6.8" height="2.8" fill="rgb(70,13,59)"/><rect x="37.5" y="40.0" width="6.8" height="2.8" fill="rgb(240,30,180)"/><rect x="37.5" y="42.5" width="6.8" height="2.8" fill="rgb(238,29,179)"/><rect x="37.5" y="45.0" width="6.8" height="2.8" fill="#140d11"/><rect x="37.5" y="47.5" width="6.8" height="2.8" fill="rgb(16,64,26)"/><rect x="37.5" y="50.0" width="6.8" height="2.8" fill="#140d11"/><rect x="37.5" y="52.5" width="6.8" height="2.8" fill="#140d11"/><rect x="37.5" y="55.0" width="6.8" height="2.8" fill="rgb(79,14,65)"/><rect x="37.5" y="57.5" width="6.8" height="2.8" fill="rgb(148,21,114)"/><rect x="37.5" y="60.0" width="6.8" height="2.8" fill="#140d11"/><rect x="37.5" y="62.5" width="6.8" height="2.8" fill="#140d11"/><rect x="37.5" y="65.0" width="6.8" height="2.8" fill="rgb(148,21,114)"/><rect x="37.5" y="67.5" width="6.8" height="2.8" fill="#140d11"/><rect x="37.5" y="70.0" width="6.8" height="2.8" fill="#140d11"/><rect x="37.5" y="72.5" width="6.8" height="2.8" fill="rgb(148,21,114)"/><rect x="37.5" y="75.0" width="6.8" height="2.8" fill="#140d11"/><rect x="37.5" y="77.5" width="6.8" height="2.8" fill="rgb(188,25,143)"/><rect x="37.5" y="80.0" width="6.8" height="2.8" fill="rgb(140,20,108)"/><rect x="37.5" y="82.5" width="6.8" height="2.8" fill="#140d11"/><rect x="37.5" y="85.0" width="6.8" height="2.8" fill="rgb(216,27,163)"/><rect x="37.5" y="87.5" width="6.8" height="2.8" fill="rgb(61,13,52)"/><rect x="37.5" y="90.0" width="6.8" height="2.8" fill="rgb(191,25,145)"/><rect x="37.5" y="92.5" width="6.8" height="2.8" fill="#140d11"/><rect x="37.5" y="95.0" width="6.8" height="2.8" fill="rgb(125,19,98)"/><rect x="37.5" y="97.5" width="6.8" height="2.8" fill="#140d11"/><rect x="43.8" y="0.0" width="6.8" height="2.8" fill="#140d11"/><rect x="43.8" y="2.5" width="6.8" height="2.8" fill="rgb(20,135,42)"/><rect x="43.8" y="5.0" width="6.8" height="2.8" fill="rgb(25,230,63)"/><rect x="43.8" y="7.5" width="6.8" height="2.8" fill="rgb(24,224,61)"/><rect x="43.8" y="10.0" width="6.8" height="2.8" fill="rgb(162,22,124)"/><rect x="43.8" y="12.5" width="6.8" height="2.8" fill="rgb(17,71,28)"/><rect x="43.8" y="15.0" width="6.8" height="2.8" fill="rgb(17,68,27)"/><rect x="43.8" y="17.5" width="6.8" height="2.8" fill="#140d11"/><rect x="43.8" y="20.0" width="6.8" height="2.8" fill="rgb(19,112,37)"/><rect x="43.8" y="22.5" width="6.8" height="2.8" fill="rgb(87,15,71)"/><rect x="43.8" y="25.0" width="6.8" height="2.8" fill="rgb(189,25,144)"/><rect x="43.8" y="27.5" width="6.8" height="2.8" fill="rgb(74,14,61)"/><rect x="43.8" y="30.0" width="6.8" height="2.8" fill="rgb(60,12,51)"/><rect x="43.8" y="32.5" width="6.8" height="2.8" fill="rgb(62,13,53)"/><rect x="43.8" y="35.0" width="6.8" height="2.8" fill="rgb(240,30,180)"/><rect x="43.8" y="37.5" width="6.8" height="2.8" fill="rgb(240,30,180)"/><rect x="43.8" y="40.0" width="6.8" height="2.8" fill="rgb(138,20,107)"/><rect x="43.8" y="42.5" width="6.8" height="2.8" fill="rgb(240,30,180)"/><rect x="43.8" y="45.0" width="6.8" height="2.8" fill="#140d11"/><rect x="43.8" y="47.5" width="6.8" height="2.8" fill="rgb(107,17,85)"/><rect x="43.8" y="50.0" width="6.8" height="2.8" fill="#140d11"/><rect x="43.8" y="52.5" width="6.8" height="2.8" fill="#140d11"/><rect x="43.8" y="55.0" width="6.8" height="2.8" fill="#140d11"/><rect x="43.8" y="57.5" width="6.8" height="2.8" fill="rgb(63,13,53)"/><rect x="43.8" y="60.0" width="6.8" height="2.8" fill="rgb(61,12,52)"/><rect x="43.8" y="62.5" width="6.8" height="2.8" fill="rgb(86,15,70)"/><rect x="43.8" y="65.0" width="6.8" height="2.8" fill="#140d11"/><rect x="43.8" y="67.5" width="6.8" height="2.8" fill="#140d11"/><rect x="43.8" y="70.0" width="6.8" height="2.8" fill="#140d11"/><rect x="43.8" y="72.5" width="6.8" height="2.8" fill="rgb(97,16,78)"/><rect x="43.8" y="75.0" width="6.8" height="2.8" fill="rgb(18,88,32)"/><rect x="43.8" y="77.5" width="6.8" height="2.8" fill="#140d11"/><rect x="43.8" y="80.0" width="6.8" height="2.8" fill="rgb(16,51,23)"/><rect x="43.8" y="82.5" width="6.8" height="2.8" fill="#140d11"/><rect x="43.8" y="85.0" width="6.8" height="2.8" fill="rgb(140,20,108)"/><rect x="43.8" y="87.5" width="6.8" height="2.8" fill="rgb(232,29,174)"/><rect x="43.8" y="90.0" width="6.8" height="2.8" fill="#140d11"/><rect x="43.8" y="92.5" width="6.8" height="2.8" fill="rgb(94,16,76)"/><rect x="43.8" y="95.0" width="6.8" height="2.8" fill="rgb(59,12,50)"/><rect x="43.8" y="97.5" width="6.8" height="2.8" fill="rgb(83,15,68)"/><rect x="50.0" y="0.0" width="6.8" height="2.8" fill="#140d11"/><rect x="50.0" y="2.5" width="6.8" height="2.8" fill="rgb(98,16,79)"/><rect x="50.0" y="5.0" width="6.8" height="2.8" fill="#140d11"/><rect x="50.0" y="7.5" width="6.8" height="2.8" fill="#140d11"/><rect x="50.0" y="10.0" width="6.8" height="2.8" fill="#140d11"/><rect x="50.0" y="12.5" width="6.8" height="2.8" fill="rgb(219,28,165)"/><rect x="50.0" y="15.0" width="6.8" height="2.8" fill="rgb(16,63,26)"/><rect x="50.0" y="17.5" width="6.8" height="2.8" fill="#140d11"/><rect x="50.0" y="20.0" width="6.8" height="2.8" fill="rgb(150,21,116)"/><rect x="50.0" y="22.5" width="6.8" height="2.8" fill="rgb(63,13,53)"/><rect x="50.0" y="25.0" width="6.8" height="2.8" fill="#140d11"/><rect x="50.0" y="27.5" width="6.8" height="2.8" fill="rgb(25,230,63)"/><rect x="50.0" y="30.0" width="6.8" height="2.8" fill="rgb(22,171,50)"/><rect x="50.0" y="32.5" width="6.8" height="2.8" fill="rgb(25,230,63)"/><rect x="50.0" y="35.0" width="6.8" height="2.8" fill="rgb(22,174,50)"/><rect x="50.0" y="37.5" width="6.8" height="2.8" fill="rgb(17,76,29)"/><rect x="50.0" y="40.0" width="6.8" height="2.8" fill="rgb(18,103,35)"/><rect x="50.0" y="42.5" width="6.8" height="2.8" fill="rgb(16,58,25)"/><rect x="50.0" y="45.0" width="6.8" height="2.8" fill="rgb(55,12,48)"/><rect x="50.0" y="47.5" width="6.8" height="2.8" fill="rgb(16,64,26)"/><rect x="50.0" y="50.0" width="6.8" height="2.8" fill="#140d11"/><rect x="50.0" y="52.5" width="6.8" height="2.8" fill="#140d11"/><rect x="50.0" y="55.0" width="6.8" height="2.8" fill="#140d11"/><rect x="50.0" y="57.5" width="6.8" height="2.8" fill="rgb(77,14,63)"/><rect x="50.0" y="60.0" width="6.8" height="2.8" fill="rgb(65,13,55)"/><rect x="50.0" y="62.5" width="6.8" height="2.8" fill="rgb(112,17,88)"/><rect x="50.0" y="65.0" width="6.8" height="2.8" fill="rgb(114,18,90)"/><rect x="50.0" y="67.5" width="6.8" height="2.8" fill="rgb(217,27,163)"/><rect x="50.0" y="70.0" width="6.8" height="2.8" fill="rgb(109,17,86)"/><rect x="50.0" y="72.5" width="6.8" height="2.8" fill="rgb(160,22,123)"/><rect x="50.0" y="75.0" width="6.8" height="2.8" fill="rgb(200,26,151)"/><rect x="50.0" y="77.5" width="6.8" height="2.8" fill="#140d11"/><rect x="50.0" y="80.0" width="6.8" height="2.8" fill="#140d11"/><rect x="50.0" y="82.5" width="6.8" height="2.8" fill="rgb(90,15,73)"/><rect x="50.0" y="85.0" width="6.8" height="2.8" fill="rgb(16,50,23)"/><rect x="50.0" y="87.5" width="6.8" height="2.8" fill="#140d11"/><rect x="50.0" y="90.0" width="6.8" height="2.8" fill="#140d11"/><rect x="50.0" y="92.5" width="6.8" height="2.8" fill="rgb(113,17,89)"/><rect x="50.0" y="95.0" width="6.8" height="2.8" fill="rgb(208,26,157)"/><rect x="50.0" y="97.5" width="6.8" height="2.8" fill="#140d11"/><rect x="56.2" y="0.0" width="6.8" height="2.8" fill="#140d11"/><rect x="56.2" y="2.5" width="6.8" height="2.8" fill="rgb(16,57,25)"/><rect x="56.2" y="5.0" width="6.8" height="2.8" fill="#140d11"/><rect x="56.2" y="7.5" width="6.8" height="2.8" fill="rgb(18,98,34)"/><rect x="56.2" y="10.0" width="6.8" height="2.8" fill="#140d11"/><rect x="56.2" y="12.5" width="6.8" height="2.8" fill="rgb(16,53,24)"/><rect x="56.2" y="15.0" width="6.8" height="2.8" fill="rgb(75,14,62)"/><rect x="56.2" y="17.5" width="6.8" height="2.8" fill="rgb(216,27,163)"/><rect x="56.2" y="20.0" width="6.8" height="2.8" fill="#140d11"/><rect x="56.2" y="22.5" width="6.8" height="2.8" fill="rgb(19,120,38)"/><rect x="56.2" y="25.0" width="6.8" height="2.8" fill="rgb(145,20,112)"/><rect x="56.2" y="27.5" width="6.8" height="2.8" fill="rgb(25,230,63)"/><rect x="56.2" y="30.0" width="6.8" height="2.8" fill="rgb(18,103,35)"/><rect x="56.2" y="32.5" width="6.8" height="2.8" fill="rgb(20,129,41)"/><rect x="56.2" y="35.0" width="6.8" height="2.8" fill="rgb(22,176,51)"/><rect x="56.2" y="37.5" width="6.8" height="2.8" fill="rgb(23,195,55)"/><rect x="56.2" y="40.0" width="6.8" height="2.8" fill="rgb(17,78,29)"/><rect x="56.2" y="42.5" width="6.8" height="2.8" fill="#140d11"/><rect x="56.2" y="45.0" width="6.8" height="2.8" fill="#140d11"/><rect x="56.2" y="47.5" width="6.8" height="2.8" fill="rgb(16,64,26)"/><rect x="56.2" y="50.0" width="6.8" height="2.8" fill="rgb(128,19,100)"/><rect x="56.2" y="52.5" width="6.8" height="2.8" fill="rgb(16,62,26)"/><rect x="56.2" y="55.0" width="6.8" height="2.8" fill="rgb(18,89,32)"/><rect x="56.2" y="57.5" width="6.8" height="2.8" fill="rgb(20,136,42)"/><rect x="56.2" y="60.0" width="6.8" height="2.8" fill="rgb(190,25,144)"/><rect x="56.2" y="62.5" width="6.8" height="2.8" fill="#140d11"/><rect x="56.2" y="65.0" width="6.8" height="2.8" fill="rgb(240,30,180)"/><rect x="56.2" y="67.5" width="6.8" height="2.8" fill="#140d11"/><rect x="56.2" y="70.0" width="6.8" height="2.8" fill="#140d11"/><rect x="56.2" y="72.5" width="6.8" height="2.8" fill="rgb(169,23,129)"/><rect x="56.2" y="75.0" width="6.8" height="2.8" fill="rgb(219,28,165)"/><rect x="56.2" y="77.5" width="6.8" height="2.8" fill="#140d11"/><rect x="56.2" y="80.0" width="6.8" height="2.8" fill="#140d11"/><rect x="56.2" y="82.5" width="6.8" height="2.8" fill="rgb(131,19,102)"/><rect x="56.2" y="85.0" width="6.8" height="2.8" fill="rgb(84,15,68)"/><rect x="56.2" y="87.5" width="6.8" height="2.8" fill="rgb(240,30,180)"/><rect x="56.2" y="90.0" width="6.8" height="2.8" fill="rgb(123,18,96)"/><rect x="56.2" y="92.5" width="6.8" height="2.8" fill="#140d11"/><rect x="56.2" y="95.0" width="6.8" height="2.8" fill="#140d11"/><rect x="56.2" y="97.5" width="6.8" height="2.8" fill="rgb(16,64,26)"/><rect x="62.5" y="0.0" width="6.8" height="2.8" fill="rgb(94,16,76)"/><rect x="62.5" y="2.5" width="6.8" height="2.8" fill="rgb(209,27,158)"/><rect x="62.5" y="5.0" width="6.8" height="2.8" fill="#140d11"/><rect x="62.5" y="7.5" width="6.8" height="2.8" fill="#140d11"/><rect x="62.5" y="10.0" width="6.8" height="2.8" fill="#140d11"/><rect x="62.5" y="12.5" width="6.8" height="2.8" fill="rgb(16,56,24)"/><rect x="62.5" y="15.0" width="6.8" height="2.8" fill="#140d11"/><rect x="62.5" y="17.5" width="6.8" height="2.8" fill="rgb(19,114,37)"/><rect x="62.5" y="20.0" width="6.8" height="2.8" fill="rgb(18,106,35)"/><rect x="62.5" y="22.5" width="6.8" height="2.8" fill="rgb(144,20,111)"/><rect x="62.5" y="25.0" width="6.8" height="2.8" fill="#140d11"/><rect x="62.5" y="27.5" width="6.8" height="2.8" fill="rgb(25,230,63)"/><rect x="62.5" y="30.0" width="6.8" height="2.8" fill="rgb(20,129,40)"/><rect x="62.5" y="32.5" width="6.8" height="2.8" fill="rgb(25,230,63)"/><rect x="62.5" y="35.0" width="6.8" height="2.8" fill="rgb(21,165,48)"/><rect x="62.5" y="37.5" width="6.8" height="2.8" fill="rgb(20,127,40)"/><rect x="62.5" y="40.0" width="6.8" height="2.8" fill="rgb(25,230,63)"/><rect x="62.5" y="42.5" width="6.8" height="2.8" fill="rgb(17,80,30)"/><rect x="62.5" y="45.0" width="6.8" height="2.8" fill="#140d11"/><rect x="62.5" y="47.5" width="6.8" height="2.8" fill="rgb(17,69,27)"/><rect x="62.5" y="50.0" width="6.8" height="2.8" fill="rgb(187,24,142)"/><rect x="62.5" y="52.5" width="6.8" height="2.8" fill="rgb(125,19,97)"/><rect x="62.5" y="55.0" width="6.8" height="2.8" fill="#140d11"/><rect x="62.5" y="57.5" width="6.8" height="2.8" fill="rgb(61,13,52)"/><rect x="62.5" y="60.0" width="6.8" height="2.8" fill="rgb(159,22,122)"/><rect x="62.5" y="62.5" width="6.8" height="2.8" fill="#140d11"/><rect x="62.5" y="65.0" width="6.8" height="2.8" fill="#140d11"/><rect x="62.5" y="67.5" width="6.8" height="2.8" fill="#140d11"/><rect x="62.5" y="70.0" width="6.8" height="2.8" fill="#140d11"/><rect x="62.5" y="72.5" width="6.8" height="2.8" fill="rgb(85,15,69)"/><rect x="62.5" y="75.0" width="6.8" height="2.8" fill="rgb(102,16,82)"/><rect x="62.5" y="77.5" width="6.8" height="2.8" fill="rgb(74,14,61)"/><rect x="62.5" y="80.0" width="6.8" height="2.8" fill="rgb(81,14,66)"/><rect x="62.5" y="82.5" width="6.8" height="2.8" fill="rgb(16,56,24)"/><rect x="62.5" y="85.0" width="6.8" height="2.8" fill="rgb(16,64,26)"/><rect x="62.5" y="87.5" width="6.8" height="2.8" fill="#140d11"/><rect x="62.5" y="90.0" width="6.8" height="2.8" fill="#140d11"/><rect x="62.5" y="92.5" width="6.8" height="2.8" fill="rgb(82,15,67)"/><rect x="62.5" y="95.0" width="6.8" height="2.8" fill="#140d11"/><rect x="62.5" y="97.5" width="6.8" height="2.8" fill="rgb(91,15,73)"/><rect x="68.8" y="0.0" width="6.8" height="2.8" fill="#140d11"/><rect x="68.8" y="2.5" width="6.8" height="2.8" fill="rgb(144,20,111)"/><rect x="68.8" y="5.0" width="6.8" height="2.8" fill="#140d11"/><rect x="68.8" y="7.5" width="6.8" height="2.8" fill="rgb(19,114,37)"/><rect x="68.8" y="10.0" width="6.8" height="2.8" fill="rgb(85,15,69)"/><rect x="68.8" y="12.5" width="6.8" height="2.8" fill="rgb(126,19,99)"/><rect x="68.8" y="15.0" width="6.8" height="2.8" fill="#140d11"/><rect x="68.8" y="17.5" width="6.8" height="2.8" fill="rgb(20,136,42)"/><rect x="68.8" y="20.0" width="6.8" height="2.8" fill="rgb(19,115,37)"/><rect x="68.8" y="22.5" width="6.8" height="2.8" fill="#140d11"/><rect x="68.8" y="25.0" width="6.8" height="2.8" fill="#140d11"/><rect x="68.8" y="27.5" width="6.8" height="2.8" fill="#140d11"/><rect x="68.8" y="30.0" width="6.8" height="2.8" fill="rgb(77,14,64)"/><rect x="68.8" y="32.5" width="6.8" height="2.8" fill="#140d11"/><rect x="68.8" y="35.0" width="6.8" height="2.8" fill="#140d11"/><rect x="68.8" y="37.5" width="6.8" height="2.8" fill="rgb(125,19,98)"/><rect x="68.8" y="40.0" width="6.8" height="2.8" fill="#140d11"/><rect x="68.8" y="42.5" width="6.8" height="2.8" fill="#140d11"/><rect x="68.8" y="45.0" width="6.8" height="2.8" fill="rgb(72,14,60)"/><rect x="68.8" y="47.5" width="6.8" height="2.8" fill="rgb(92,15,74)"/><rect x="68.8" y="50.0" width="6.8" height="2.8" fill="#140d11"/><rect x="68.8" y="52.5" width="6.8" height="2.8" fill="rgb(18,88,31)"/><rect x="68.8" y="55.0" width="6.8" height="2.8" fill="rgb(86,15,70)"/><rect x="68.8" y="57.5" width="6.8" height="2.8" fill="rgb(97,16,78)"/><rect x="68.8" y="60.0" width="6.8" height="2.8" fill="#140d11"/><rect x="68.8" y="62.5" width="6.8" height="2.8" fill="rgb(81,14,66)"/><rect x="68.8" y="65.0" width="6.8" height="2.8" fill="rgb(130,19,101)"/><rect x="68.8" y="67.5" width="6.8" height="2.8" fill="rgb(16,51,23)"/><rect x="68.8" y="70.0" width="6.8" height="2.8" fill="rgb(157,22,120)"/><rect x="68.8" y="72.5" width="6.8" height="2.8" fill="rgb(125,19,98)"/><rect x="68.8" y="75.0" width="6.8" height="2.8" fill="rgb(119,18,93)"/><rect x="68.8" y="77.5" width="6.8" height="2.8" fill="rgb(141,20,109)"/><rect x="68.8" y="80.0" width="6.8" height="2.8" fill="rgb(82,14,67)"/><rect x="68.8" y="82.5" width="6.8" height="2.8" fill="#140d11"/><rect x="68.8" y="85.0" width="6.8" height="2.8" fill="rgb(16,54,24)"/><rect x="68.8" y="87.5" width="6.8" height="2.8" fill="#140d11"/><rect x="68.8" y="90.0" width="6.8" height="2.8" fill="rgb(62,13,52)"/><rect x="68.8" y="92.5" width="6.8" height="2.8" fill="rgb(180,24,137)"/><rect x="68.8" y="95.0" width="6.8" height="2.8" fill="rgb(68,13,57)"/><rect x="68.8" y="97.5" width="6.8" height="2.8" fill="rgb(146,21,113)"/><rect x="75.0" y="0.0" width="6.8" height="2.8" fill="#140d11"/><rect x="75.0" y="2.5" width="6.8" height="2.8" fill="rgb(17,75,29)"/><rect x="75.0" y="5.0" width="6.8" height="2.8" fill="#140d11"/><rect x="75.0" y="7.5" width="6.8" height="2.8" fill="#140d11"/><rect x="75.0" y="10.0" width="6.8" height="2.8" fill="rgb(64,13,54)"/><rect x="75.0" y="12.5" width="6.8" height="2.8" fill="#140d11"/><rect x="75.0" y="15.0" width="6.8" height="2.8" fill="#140d11"/><rect x="75.0" y="17.5" width="6.8" height="2.8" fill="rgb(77,14,63)"/><rect x="75.0" y="20.0" width="6.8" height="2.8" fill="#140d11"/><rect x="75.0" y="22.5" width="6.8" height="2.8" fill="rgb(17,67,27)"/><rect x="75.0" y="25.0" width="6.8" height="2.8" fill="rgb(143,20,111)"/><rect x="75.0" y="27.5" width="6.8" height="2.8" fill="#140d11"/><rect x="75.0" y="30.0" width="6.8" height="2.8" fill="rgb(96,16,77)"/><rect x="75.0" y="32.5" width="6.8" height="2.8" fill="rgb(19,124,39)"/><rect x="75.0" y="35.0" width="6.8" height="2.8" fill="#140d11"/><rect x="75.0" y="37.5" width="6.8" height="2.8" fill="#140d11"/><rect x="75.0" y="40.0" width="6.8" height="2.8" fill="#140d11"/><rect x="75.0" y="42.5" width="6.8" height="2.8" fill="#140d11"/><rect x="75.0" y="45.0" width="6.8" height="2.8" fill="#140d11"/><rect x="75.0" y="47.5" width="6.8" height="2.8" fill="rgb(136,20,105)"/><rect x="75.0" y="50.0" width="6.8" height="2.8" fill="#140d11"/><rect x="75.0" y="52.5" width="6.8" height="2.8" fill="#140d11"/><rect x="75.0" y="55.0" width="6.8" height="2.8" fill="rgb(200,26,151)"/><rect x="75.0" y="57.5" width="6.8" height="2.8" fill="#140d11"/><rect x="75.0" y="60.0" width="6.8" height="2.8" fill="#140d11"/><rect x="75.0" y="62.5" width="6.8" height="2.8" fill="rgb(211,27,159)"/><rect x="75.0" y="65.0" width="6.8" height="2.8" fill="rgb(101,16,81)"/><rect x="75.0" y="67.5" width="6.8" height="2.8" fill="rgb(87,15,71)"/><rect x="75.0" y="70.0" width="6.8" height="2.8" fill="rgb(106,17,84)"/><rect x="75.0" y="72.5" width="6.8" height="2.8" fill="#140d11"/><rect x="75.0" y="75.0" width="6.8" height="2.8" fill="rgb(183,24,139)"/><rect x="75.0" y="77.5" width="6.8" height="2.8" fill="rgb(81,14,66)"/><rect x="75.0" y="80.0" width="6.8" height="2.8" fill="#140d11"/><rect x="75.0" y="82.5" width="6.8" height="2.8" fill="#140d11"/><rect x="75.0" y="85.0" width="6.8" height="2.8" fill="rgb(61,12,52)"/><rect x="75.0" y="87.5" width="6.8" height="2.8" fill="rgb(82,15,67)"/><rect x="75.0" y="90.0" width="6.8" height="2.8" fill="#140d11"/><rect x="75.0" y="92.5" width="6.8" height="2.8" fill="rgb(240,30,180)"/><rect x="75.0" y="95.0" width="6.8" height="2.8" fill="#140d11"/><rect x="75.0" y="97.5" width="6.8" height="2.8" fill="rgb(87,15,71)"/><rect x="81.2" y="0.0" width="6.8" height="2.8" fill="rgb(104,17,83)"/><rect x="81.2" y="2.5" width="6.8" height="2.8" fill="#140d11"/><rect x="81.2" y="5.0" width="6.8" height="2.8" fill="rgb(161,22,124)"/><rect x="81.2" y="7.5" width="6.8" height="2.8" fill="rgb(185,24,140)"/><rect x="81.2" y="10.0" width="6.8" height="2.8" fill="#140d11"/><rect x="81.2" y="12.5" width="6.8" height="2.8" fill="rgb(66,13,56)"/><rect x="81.2" y="15.0" width="6.8" height="2.8" fill="rgb(16,57,25)"/><rect x="81.2" y="17.5" width="6.8" height="2.8" fill="rgb(74,14,61)"/><rect x="81.2" y="20.0" width="6.8" height="2.8" fill="rgb(108,17,85)"/><rect x="81.2" y="22.5" width="6.8" height="2.8" fill="rgb(79,14,65)"/><rect x="81.2" y="25.0" width="6.8" height="2.8" fill="rgb(20,141,43)"/><rect x="81.2" y="27.5" width="6.8" height="2.8" fill="#140d11"/><rect x="81.2" y="30.0" width="6.8" height="2.8" fill="rgb(55,12,48)"/><rect x="81.2" y="32.5" width="6.8" height="2.8" fill="rgb(82,14,67)"/><rect x="81.2" y="35.0" width="6.8" height="2.8" fill="rgb(91,15,73)"/><rect x="81.2" y="37.5" width="6.8" height="2.8" fill="#140d11"/><rect x="81.2" y="40.0" width="6.8" height="2.8" fill="#140d11"/><rect x="81.2" y="42.5" width="6.8" height="2.8" fill="rgb(18,89,32)"/><rect x="81.2" y="45.0" width="6.8" height="2.8" fill="rgb(18,88,31)"/><rect x="81.2" y="47.5" width="6.8" height="2.8" fill="#140d11"/><rect x="81.2" y="50.0" width="6.8" height="2.8" fill="rgb(118,18,93)"/><rect x="81.2" y="52.5" width="6.8" height="2.8" fill="rgb(138,20,107)"/><rect x="81.2" y="55.0" width="6.8" height="2.8" fill="rgb(240,30,180)"/><rect x="81.2" y="57.5" width="6.8" height="2.8" fill="rgb(154,21,119)"/><rect x="81.2" y="60.0" width="6.8" height="2.8" fill="#140d11"/><rect x="81.2" y="62.5" width="6.8" height="2.8" fill="rgb(90,15,73)"/><rect x="81.2" y="65.0" width="6.8" height="2.8" fill="#140d11"/><rect x="81.2" y="67.5" width="6.8" height="2.8" fill="rgb(191,25,145)"/><rect x="81.2" y="70.0" width="6.8" height="2.8" fill="#140d11"/><rect x="81.2" y="72.5" width="6.8" height="2.8" fill="#140d11"/><rect x="81.2" y="75.0" width="6.8" height="2.8" fill="rgb(61,13,52)"/><rect x="81.2" y="77.5" width="6.8" height="2.8" fill="#140d11"/><rect x="81.2" y="80.0" width="6.8" height="2.8" fill="rgb(240,30,180)"/><rect x="81.2" y="82.5" width="6.8" height="2.8" fill="rgb(109,17,86)"/><rect x="81.2" y="85.0" width="6.8" height="2.8" fill="rgb(142,20,110)"/><rect x="81.2" y="87.5" width="6.8" height="2.8" fill="rgb(17,81,30)"/><rect x="81.2" y="90.0" width="6.8" height="2.8" fill="rgb(77,14,64)"/><rect x="81.2" y="92.5" width="6.8" height="2.8" fill="rgb(104,17,83)"/><rect x="81.2" y="95.0" width="6.8" height="2.8" fill="#140d11"/><rect x="81.2" y="97.5" width="6.8" height="2.8" fill="rgb(158,22,121)"/><rect x="87.5" y="0.0" width="6.8" height="2.8" fill="rgb(19,112,37)"/><rect x="87.5" y="2.5" width="6.8" height="2.8" fill="rgb(61,12,52)"/><rect x="87.5" y="5.0" width="6.8" height="2.8" fill="#140d11"/><rect x="87.5" y="7.5" width="6.8" height="2.8" fill="rgb(76,14,63)"/><rect x="87.5" y="10.0" width="6.8" height="2.8" fill="rgb(16,62,26)"/><rect x="87.5" y="12.5" width="6.8" height="2.8" fill="rgb(200,26,151)"/><rect x="87.5" y="15.0" width="6.8" height="2.8" fill="rgb(16,54,24)"/><rect x="87.5" y="17.5" width="6.8" height="2.8" fill="rgb(69,13,58)"/><rect x="87.5" y="20.0" width="6.8" height="2.8" fill="#140d11"/><rect x="87.5" y="22.5" width="6.8" height="2.8" fill="rgb(95,16,76)"/><rect x="87.5" y="25.0" width="6.8" height="2.8" fill="#140d11"/><rect x="87.5" y="27.5" width="6.8" height="2.8" fill="#140d11"/><rect x="87.5" y="30.0" width="6.8" height="2.8" fill="#140d11"/><rect x="87.5" y="32.5" width="6.8" height="2.8" fill="#140d11"/><rect x="87.5" y="35.0" width="6.8" height="2.8" fill="rgb(16,50,23)"/><rect x="87.5" y="37.5" width="6.8" height="2.8" fill="rgb(17,76,29)"/><rect x="87.5" y="40.0" width="6.8" height="2.8" fill="#140d11"/><rect x="87.5" y="42.5" width="6.8" height="2.8" fill="rgb(98,16,78)"/><rect x="87.5" y="45.0" width="6.8" height="2.8" fill="rgb(106,17,84)"/><rect x="87.5" y="47.5" width="6.8" height="2.8" fill="rgb(16,54,24)"/><rect x="87.5" y="50.0" width="6.8" height="2.8" fill="rgb(93,16,75)"/><rect x="87.5" y="52.5" width="6.8" height="2.8" fill="#140d11"/><rect x="87.5" y="55.0" width="6.8" height="2.8" fill="rgb(61,12,52)"/><rect x="87.5" y="57.5" width="6.8" height="2.8" fill="rgb(154,21,118)"/><rect x="87.5" y="60.0" width="6.8" height="2.8" fill="#140d11"/><rect x="87.5" y="62.5" width="6.8" height="2.8" fill="rgb(18,92,32)"/><rect x="87.5" y="65.0" width="6.8" height="2.8" fill="rgb(77,14,64)"/><rect x="87.5" y="67.5" width="6.8" height="2.8" fill="rgb(146,21,113)"/><rect x="87.5" y="70.0" width="6.8" height="2.8" fill="rgb(137,20,106)"/><rect x="87.5" y="72.5" width="6.8" height="2.8" fill="#140d11"/><rect x="87.5" y="75.0" width="6.8" height="2.8" fill="rgb(111,17,88)"/><rect x="87.5" y="77.5" width="6.8" height="2.8" fill="rgb(95,16,77)"/><rect x="87.5" y="80.0" width="6.8" height="2.8" fill="#140d11"/><rect x="87.5" y="82.5" width="6.8" height="2.8" fill="rgb(63,13,54)"/><rect x="87.5" y="85.0" width="6.8" height="2.8" fill="rgb(56,12,49)"/><rect x="87.5" y="87.5" width="6.8" height="2.8" fill="rgb(108,17,85)"/><rect x="87.5" y="90.0" width="6.8" height="2.8" fill="rgb(116,18,92)"/><rect x="87.5" y="92.5" width="6.8" height="2.8" fill="#140d11"/><rect x="87.5" y="95.0" width="6.8" height="2.8" fill="#140d11"/><rect x="87.5" y="97.5" width="6.8" height="2.8" fill="#140d11"/><rect x="93.8" y="0.0" width="6.8" height="2.8" fill="#140d11"/><rect x="93.8" y="2.5" width="6.8" height="2.8" fill="#140d11"/><rect x="93.8" y="5.0" width="6.8" height="2.8" fill="#140d11"/><rect x="93.8" y="7.5" width="6.8" height="2.8" fill="#140d11"/><rect x="93.8" y="10.0" width="6.8" height="2.8" fill="#140d11"/><rect x="93.8" y="12.5" width="6.8" height="2.8" fill="rgb(17,77,29)"/><rect x="93.8" y="15.0" width="6.8" height="2.8" fill="#140d11"/><rect x="93.8" y="17.5" width="6.8" height="2.8" fill="#140d11"/><rect x="93.8" y="20.0" width="6.8" height="2.8" fill="rgb(80,14,66)"/><rect x="93.8" y="22.5" width="6.8" height="2.8" fill="#140d11"/><rect x="93.8" y="25.0" width="6.8" height="2.8" fill="#140d11"/><rect x="93.8" y="27.5" width="6.8" height="2.8" fill="#140d11"/><rect x="93.8" y="30.0" width="6.8" height="2.8" fill="rgb(69,13,58)"/><rect x="93.8" y="32.5" width="6.8" height="2.8" fill="#140d11"/><rect x="93.8" y="35.0" width="6.8" height="2.8" fill="rgb(25,230,63)"/><rect x="93.8" y="37.5" width="6.8" height="2.8" fill="#140d11"/><rect x="93.8" y="40.0" width="6.8" height="2.8" fill="#140d11"/><rect x="93.8" y="42.5" width="6.8" height="2.8" fill="#140d11"/><rect x="93.8" y="45.0" width="6.8" height="2.8" fill="#140d11"/><rect x="93.8" y="47.5" width="6.8" height="2.8" fill="#140d11"/><rect x="93.8" y="50.0" width="6.8" height="2.8" fill="rgb(119,18,93)"/><rect x="93.8" y="52.5" width="6.8" height="2.8" fill="rgb(117,18,92)"/><rect x="93.8" y="55.0" width="6.8" height="2.8" fill="#140d11"/><rect x="93.8" y="57.5" width="6.8" height="2.8" fill="#140d11"/><rect x="93.8" y="60.0" width="6.8" height="2.8" fill="rgb(72,14,60)"/><rect x="93.8" y="62.5" width="6.8" height="2.8" fill="rgb(131,19,102)"/><rect x="93.8" y="65.0" width="6.8" height="2.8" fill="#140d11"/><rect x="93.8" y="67.5" width="6.8" height="2.8" fill="rgb(162,22,124)"/><rect x="93.8" y="70.0" width="6.8" height="2.8" fill="#140d11"/><rect x="93.8" y="72.5" width="6.8" height="2.8" fill="rgb(90,15,73)"/><rect x="93.8" y="75.0" width="6.8" height="2.8" fill="rgb(64,13,54)"/><rect x="93.8" y="77.5" width="6.8" height="2.8" fill="#140d11"/><rect x="93.8" y="80.0" width="6.8" height="2.8" fill="#140d11"/><rect x="93.8" y="82.5" width="6.8" height="2.8" fill="rgb(185,24,140)"/><rect x="93.8" y="85.0" width="6.8" height="2.8" fill="rgb(83,15,67)"/><rect x="93.8" y="87.5" width="6.8" height="2.8" fill="#140d11"/><rect x="93.8" y="90.0" width="6.8" height="2.8" fill="rgb(162,22,124)"/><rect x="93.8" y="92.5" width="6.8" height="2.8" fill="rgb(240,30,180)"/><rect x="93.8" y="95.0" width="6.8" height="2.8" fill="rgb(69,13,58)"/><rect x="93.8" y="97.5" width="6.8" height="2.8" fill="rgb(67,13,56)"/></svg>
<svg style="position:absolute;left:1219px;top:266px" width="324" height="31" viewBox="0 0 324 31"><path d="M16 0H323V30.5H16L0 15.25Z" fill="#fcefc8"/></svg>
<div style="position:absolute;left:1218px;top:356px;width:356px;height:168px;background:#f6f6f6;border-left:1px solid #d8d8d8;box-sizing:border-box;"></div>
<div style="position:absolute;left:1224px;top:385px;width:350px;height:1px;background:#cfcfcf;"></div>
<svg style="position:absolute;left:1223px;top:363.5px;z-index:2" width="18" height="14" viewBox="0 0 18 14"><path d="M0 0H18L9 13.5Z" fill="#2f65a6"/></svg>
<div style="position:absolute;left:1218px;top:556px;width:356px;height:7px;background:#8ea9c4;"></div>
<div style="position:absolute;left:1218px;top:712.5px;width:356px;height:7px;background:#8ea9c4;"></div>
<div style="position:absolute;left:1218px;top:781px;width:356px;height:7px;background:#8ea9c4;"></div>
<svg style="position:absolute;left:1555px;top:567px" width="19" height="18" viewBox="0 0 19 18"><rect x="0.5" y="0.5" width="18" height="17" rx="3" fill="#f7f7f7" stroke="#c8c8c8"/><path d="M5 11H14L9.5 6Z" fill="#223a66"/></svg>
<svg style="position:absolute;left:1555px;top:723px" width="19" height="18" viewBox="0 0 19 18"><rect x="0.5" y="0.5" width="18" height="17" rx="3" fill="#f7f7f7" stroke="#c8c8c8"/><path d="M5 7H14L9.5 12Z" fill="#223a66"/></svg>
<svg style="position:absolute;left:1555px;top:792.5px" width="19" height="18" viewBox="0 0 19 18"><rect x="0.5" y="0.5" width="18" height="17" rx="3" fill="#f7f7f7" stroke="#c8c8c8"/><path d="M5 11H14L9.5 6Z" fill="#223a66"/></svg>
<div style="position:absolute;left:1296px;top:597px;width:138px;height:23px;background:#fff;border:1px solid #a0a0a0;box-sizing:border-box;"></div>
<svg style="position:absolute;left:1418px;top:604.5px;z-index:2" width="7" height="7" viewBox="0 0 7 7"><path d="M0 0H7L3.5 6.5Z" fill="#000"/></svg>
<div style="position:absolute;left:1220px;top:643px;width:110px;height:31px;background:#f6f6f6;border:1px solid #efefef;border-radius:6px;box-sizing:border-box;"></div>
<svg style="position:absolute;left:1217.5px;top:854px" width="20" height="19" viewBox="0 0 20 19"><circle cx="7.5" cy="7.5" r="5.8" fill="#e9e9e9" stroke="#333" stroke-width="2.2"/><path d="M11.5 11.5L17.5 17.5" stroke="#222" stroke-width="3" stroke-linecap="round"/></svg>
<svg style="position:absolute;left:1217.5px;top:909px" width="20" height="19" viewBox="0 0 20 19"><circle cx="7.5" cy="7.5" r="5.8" fill="#e9e9e9" stroke="#333" stroke-width="2.2"/><path d="M11.5 11.5L17.5 17.5" stroke="#222" stroke-width="3" stroke-linecap="round"/></svg>
<svg style="position:absolute;left:1217.5px;top:965px" width="20" height="19" viewBox="0 0 20 19"><circle cx="7.5" cy="7.5" r="5.8" fill="#e9e9e9" stroke="#333" stroke-width="2.2"/><path d="M11.5 11.5L17.5 17.5" stroke="#222" stroke-width="3" stroke-linecap="round"/></svg>
<div style="position:absolute;left:1217px;top:900px;width:358px;height:0;border-top:1px dotted #c8c8c8;"></div>
<div style="position:absolute;left:1217px;top:955px;width:358px;height:0;border-top:1px dotted #c8c8c8;"></div>
<div style="position:absolute;left:1217px;top:1010px;width:358px;height:0;border-top:1px dotted #c8c8c8;"></div>
<div style="position:absolute;left:222px;top:408px;width:413px;height:255px;background:#fff;border:4px solid #3d6fa6;border-radius:6px;box-sizing:border-box;z-index:10;overflow:hidden"><div style="position:absolute;left:0;top:181px;width:100%;height:80px;background:#f4f4f4;border-top:1px solid #e2e2e2;"></div><div style="position:absolute;left:17px;top:203px;width:1px;height:24px;background:#555;"></div></div>
<svg style="position:absolute;left:213px;top:416px;z-index:11" width="12" height="20" viewBox="0 0 12 20"><path d="M12 0L1 10L12 20Z" fill="#3d6fa6"/></svg>
<svg style="position:absolute;left:613px;top:420px;z-index:20" width="11" height="11" viewBox="0 0 11 11"><path d="M1.5 1.5L9.5 9.5M9.5 1.5L1.5 9.5" stroke="#3d6fa6" stroke-width="2.2"/></svg>
<svg style="position:absolute;left:241px;top:471px;z-index:20" width="14" height="14" viewBox="0 0 14 14"><rect x="0.5" y="0.5" width="13" height="13" rx="2" fill="#e8e8e8" stroke="#b0b0b0"/><path d="M3 7L6 10L11.5 3" fill="none" stroke="#222" stroke-width="2"/></svg>
<div style="position:absolute;left:243px;top:531px;width:362px;height:23px;background:#fff;border:1px solid #7d9ad6;border-top:2px solid #7d9ad6;border-bottom-color:#99a;box-sizing:border-box;z-index:20"></div>
<svg style="position:absolute;left:301px;top:534px;z-index:21" width="9" height="17" viewBox="0 0 9 17"><path d="M1 1H3.5C4 1 4.5 1.5 4.5 2V15C4.5 15.5 4 16 3.5 16H1M8 1H5.5C5 1 4.5 1.5 4.5 2M4.5 15C4.5 15.5 5 16 5.5 16H8" fill="none" stroke="#111" stroke-width="1.2"/></svg>
<div style="position:absolute;left:243px;top:553.5px;width:360px;height:468px;background:#fff;border:1px solid #8c8c8c;box-sizing:border-box;box-shadow:5px 4px 7px rgba(0,0,0,0.42);z-index:30"></div>
<div style="position:absolute;left:243px;top:614px;width:1.5px;height:25px;background:#4a4a4a;z-index:32"></div>
<div style="position:absolute;left:1725px;top:970px;width:3px;height:40px;background:#a8a8a8;"></div>
<div style="position:absolute;left:0;top:1021px;width:1728px;height:8px;background:#1877d3;border-bottom:1px solid #0f4f8f;box-sizing:border-box;z-index:50"></div>
<div style="position:absolute;left:0;top:1029px;width:1728px;height:51px;background:#070d14;z-index:53"></div>
<div style="position:absolute;left:0;top:1029px;width:394px;height:51px;background:#3a3a3a;z-index:54"></div>
<div style="position:absolute;left:-9px;top:1046px;width:13px;height:17px;border:2px solid #ddd;border-radius:50%;z-index:55"></div>
<svg style="position:absolute;left:360px;top:1043px;z-index:55" width="17" height="24" viewBox="0 0 17 24"><rect x="5" y="1" width="7" height="13" rx="3.5" fill="none" stroke="#c8c8c8" stroke-width="1.5"/><path d="M2 10C2 15 5 17 8.5 17C12 17 15 15 15 10M8.5 17V22M5 22.5H12" fill="none" stroke="#c8c8c8" stroke-width="1.5"/></svg>
<svg style="position:absolute;left:411px;top:1044px;z-index:55" width="26" height="22" viewBox="0 0 26 22"><rect x="5.5" y="2.5" width="15" height="17" fill="none" stroke="#e6e6e6" stroke-width="1.5"/><path d="M1.8 6V16M24.2 6V16" stroke="#e6e6e6" stroke-width="1.5"/></svg>
<svg style="position:absolute;left:472px;top:1041px;z-index:55" width="31" height="27" viewBox="0 0 31 27"><path d="M1 3H11L13 6H30V25H1Z" fill="#e8b84a"/><path d="M1 8H30V25H1Z" fill="#f7d57a"/><path d="M9 15H22V22H9Z" fill="#3b8fd6"/><path d="M12 18H19V25H12Z" fill="#f7d57a"/></svg>
<div style="position:absolute;left:463px;top:1077px;width:51px;height:3px;background:#9dc0e3;z-index:55"></div>
<svg style="position:absolute;left:536px;top:1040.5px;z-index:55" width="28" height="28" viewBox="-14 -14 28 28"><path d="M-5.37 -3.10L-11.69 -6.75A13.5 13.5 0 0 1 11.69 -6.75L5.37 -3.10A6.2 6.2 0 0 0 -5.37 -3.10Z" fill="#db4437"/><path d="M5.37 -3.10L11.69 -6.75A13.5 13.5 0 0 1 0.00 13.50L0.00 6.20A6.2 6.2 0 0 0 5.37 -3.10Z" fill="#f4c20d"/><path d="M0.00 6.20L0.00 13.50A13.5 13.5 0 0 1 -11.69 -6.75L-5.37 -3.10A6.2 6.2 0 0 0 0.00 6.20Z" fill="#0f9d58"/><circle r="6.3" fill="#fff"/><circle r="4.9" fill="#4285f4"/></svg>
<svg style="position:absolute;left:596px;top:1039px;z-index:55" width="32" height="32" viewBox="0 0 32 32"><path d="M16.5 6.5C10.5 6.5 6.5 11 6.5 16.8C6.5 22.8 10.8 27 16.5 27C21 27 24.5 24.5 25.8 20.5H19.8C19 21.8 17.8 22.5 16.5 22.5C13.8 22.5 12 20.7 11.8 18.2H26.2C26.4 17.6 26.4 16.9 26.4 16.3C26.4 10.8 22.3 6.5 16.5 6.5ZM11.9 14.3C12.3 12 14.2 10.6 16.5 10.6C18.8 10.6 20.6 12 20.9 14.3Z" fill="#41b4ec"/><path d="M6 27C2.5 28.5 2 25.5 5.5 21.5C10 16 19 8.5 25 6C29.5 4 30.5 5.5 28.5 9" fill="none" stroke="#f0c03a" stroke-width="1.9"/></svg>
<div style="position:absolute;left:644px;top:1029px;width:61px;height:51px;background:#a4561c;z-index:55"></div>
<div style="position:absolute;left:644px;top:1077px;width:61px;height:3px;background:#f58a1f;z-index:55"></div>
<svg style="position:absolute;left:658px;top:1040px;z-index:56" width="32" height="30" viewBox="0 0 32 30"><rect width="32" height="30" fill="#f2552c"/><path d="M24 8H12A3 3 0 0 0 12 14H20A3.5 3.5 0 0 1 20 21H8" fill="none" stroke="#fff" stroke-width="4.2" stroke-linecap="square"/></svg>
<svg style="position:absolute;left:721px;top:1039px;z-index:55" width="28" height="31" viewBox="0 0 28 31"><rect x="3" y="3" width="20" height="26" fill="#f4f4f4" stroke="#888" stroke-width="1"/><path d="M6 9H20M6 13H20M6 17H20M6 21H20M6 25H16" stroke="#9ab" stroke-width="1"/><path d="M25 2L15 20L14 24L17 21L27 4Z" fill="#c8a060" stroke="#6b4f2a" stroke-width="0.8"/></svg>
<div style="position:absolute;left:711px;top:1077px;width:51px;height:3px;background:#9dc0e3;z-index:55"></div>
<div style="position:absolute;left:768px;top:1029px;width:61px;height:51px;background:#3a3d40;z-index:55"></div>
<div style="position:absolute;left:768px;top:1077px;width:61px;height:3px;background:#9dc0e3;z-index:55"></div>
<svg style="position:absolute;left:783.8px;top:1040.5px;z-index:56" width="28" height="28" viewBox="-14 -14 28 28"><path d="M-5.37 -3.10L-11.69 -6.75A13.5 13.5 0 0 1 11.69 -6.75L5.37 -3.10A6.2 6.2 0 0 0 -5.37 -3.10Z" fill="#db4437"/><path d="M5.37 -3.10L11.69 -6.75A13.5 13.5 0 0 1 0.00 13.50L0.00 6.20A6.2 6.2 0 0 0 5.37 -3.10Z" fill="#f4c20d"/><path d="M0.00 6.20L0.00 13.50A13.5 13.5 0 0 1 -11.69 -6.75L-5.37 -3.10A6.2 6.2 0 0 0 0.00 6.20Z" fill="#0f9d58"/><circle r="6.3" fill="#fff"/><circle r="4.9" fill="#4285f4"/></svg>
<div style="position:absolute;left:1393.6px;top:1044.2px;width:18.6px;height:17.4px;background:#f4f4f4;z-index:55;font:17px/18px 'Liberation Sans';color:#000;text-align:center;">M</div>
<svg style="position:absolute;left:1445px;top:1044px;z-index:55" width="17" height="19" viewBox="0 0 17 19"><path d="M9 1.5C14 3 15.5 9 13 13.5C10.5 17.5 5 18 1.5 15.5C6 15.5 9.5 12 10 8C10.3 5.5 10 3.5 9 1.5Z" fill="none" stroke="#eee" stroke-width="1.4"/></svg>
<svg style="position:absolute;left:1468px;top:1044px;z-index:55" width="17" height="18" viewBox="0 0 17 18"><circle cx="3.5" cy="3" r="2.2" fill="#eee"/><path d="M13 8L16 8.5L11 17L8 16.5Z" fill="#eee"/></svg>
<svg style="position:absolute;left:1515.5px;top:1044px;z-index:55" width="20" height="19" viewBox="-10 -9.5 20 19"><path d="M-1.5 -9H1.5L2 -6.5L4.2 -5.5L6.3 -7L8.4 -4.9L7 -2.8L7.9 -0.5L9 0V3L6.8 3.5L5.8 5.6L7.1 7.7L5 9.8L2.9 8.4L0.7 9.3L0 9.5H-1.5L-2 7L-4.2 6L-6.3 7.4L-8.4 5.3L-7 3.2L-7.9 1L-9 0.5V-2L-6.8 -2.5L-5.8 -4.6L-7.1 -6.7L-5 -8.8L-2.9 -7.4L-0.7 -8.3Z" fill="none" stroke="#eee" stroke-width="1.3"/><circle cx="0" cy="0" r="3" fill="none" stroke="#eee" stroke-width="1.3"/></svg>
<svg style="position:absolute;left:1547px;top:1048px;z-index:55" width="18" height="12" viewBox="0 0 18 12"><path d="M1 11L9 2L17 11" fill="none" stroke="#eee" stroke-width="1.5"/></svg>
<svg style="position:absolute;left:1575px;top:1046px;z-index:55" width="22" height="18" viewBox="0 0 22 18"><rect x="4" y="1" width="17" height="12" fill="none" stroke="#eee" stroke-width="1.3"/><path d="M12.5 13V16M8 17H17" stroke="#eee" stroke-width="1.3"/><rect x="1" y="2" width="3" height="5" fill="none" stroke="#eee" stroke-width="1.2"/><path d="M2.5 7V17" stroke="#eee" stroke-width="1.2"/></svg>
<svg style="position:absolute;left:1605px;top:1047px;z-index:55" width="22" height="15" viewBox="0 0 22 15"><rect x="6" y="3" width="14" height="10" fill="none" stroke="#eee" stroke-width="1.3"/><rect x="20" y="6" width="1.5" height="4" fill="#eee"/><rect x="7.5" y="4.5" width="4" height="7" fill="#eee"/><path d="M2 1V5M4.5 1V5M1 5H5.5V7C5.5 8 4.5 9 3 9C2 9 1 8 1 7ZM3 9V13" fill="none" stroke="#eee" stroke-width="1.1"/></svg>
<svg style="position:absolute;left:1635px;top:1045px;z-index:55" width="22" height="19" viewBox="0 0 22 19"><path d="M1.5 6.5H5L10 2V17L5 12.5H1.5Z" fill="none" stroke="#eee" stroke-width="1.3"/><path d="M13 7C14 8.5 14 10.5 13 12" fill="none" stroke="#eee" stroke-width="1.2"/><path d="M16 4.5C18 7.5 18 11.5 16 14.5" fill="none" stroke="#aaa" stroke-width="1.1"/><path d="M19 2C22 6.5 22 12.5 19 17" fill="none" stroke="#666" stroke-width="1.1"/></svg>
<div id="tab1" style="position:absolute;top:24.90px;font-size:15px;line-height:17px;color:#5f6368;white-space:nowrap;font-family:'Liberation Sans', sans-serif;z-index:1;letter-spacing:0.400px;left:0.00px;">l - 国际版 Bing</div>
<div id="tab2" style="position:absolute;top:24.90px;font-size:15px;line-height:17px;color:#3c4043;white-space:nowrap;font-family:'Liberation Sans', sans-serif;z-index:1;letter-spacing:0.258px;left:267.00px;">colon cancer - GEO DataSets <span style="color:#c8c8c8">-</span></div>
<div id="url" style="position:absolute;top:67.00px;font-size:18px;line-height:20px;color:#202124;white-space:nowrap;font-family:'Liberation Sans', sans-serif;z-index:1;letter-spacing:0.705px;left:131.00px;"><span style="color:#70757a">https://</span>www.ncbi.nlm.nih.gov<span style="color:#70757a">/gds/?term=colon+cancer</span></div>
<div id="ncbi" style="position:absolute;top:105.10px;font-size:18.5px;line-height:21px;color:#d6eafb;white-space:nowrap;font-family:'Liberation Sans', sans-serif;z-index:1;letter-spacing:-1.034px;left:151.60px;-webkit-text-stroke:0.45px #d6eafb;">NCBI</div>
<div id="res" style="position:absolute;top:109.10px;font-size:16px;line-height:17px;color:#ffffff;white-space:nowrap;font-family:'Liberation Sans', sans-serif;z-index:1;letter-spacing:0.002px;left:215.50px;">Resources</div>
<div id="howto" style="position:absolute;top:109.10px;font-size:16px;line-height:17px;color:#ffffff;white-space:nowrap;font-family:'Liberation Sans', sans-serif;z-index:1;letter-spacing:0.188px;left:326.00px;">How To</div>
<div id="signin" style="position:absolute;top:107.50px;font-size:16px;line-height:17px;color:#ffffff;white-space:nowrap;font-family:'Liberation Sans', sans-serif;z-index:1;text-decoration:underline;letter-spacing:-0.064px;left:1454.00px;">Sign in to NCBI</div>
<div id="geods" style="position:absolute;top:150.50px;font-size:22px;line-height:25px;color:#333333;white-space:nowrap;font-family:'Liberation Sans', sans-serif;z-index:1;letter-spacing:0.135px;left:125.00px;">GEO DataSets</div>
<div id="selgeo" style="position:absolute;top:156.50px;font-size:17px;line-height:19px;color:#000;white-space:nowrap;font-family:'Liberation Sans', sans-serif;z-index:1;letter-spacing:0.233px;left:331.00px;">GEO DataSets</div>
<div id="q" style="position:absolute;top:156.10px;font-size:19px;line-height:21px;color:#000;white-space:nowrap;font-family:'Liberation Sans', sans-serif;z-index:1;letter-spacing:-0.158px;left:482.00px;">colon cancer</div>
<div id="srchbtn" style="position:absolute;top:159.50px;font-size:16px;line-height:17px;color:#fff;white-space:nowrap;font-family:'Liberation Sans', sans-serif;z-index:3;font-weight:700;letter-spacing:0.125px;left:1331.00px;text-shadow:0 1px 1px #234;">Search</div>
<div id="alert" style="position:absolute;top:186.50px;font-size:16.5px;line-height:18px;color:#475d8a;white-space:nowrap;font-family:'Liberation Sans', sans-serif;z-index:1;letter-spacing:-0.156px;left:480.50px;">Create alert</div>
<div id="adv" style="position:absolute;top:186.50px;font-size:16.5px;line-height:18px;color:#475d8a;white-space:nowrap;font-family:'Liberation Sans', sans-serif;z-index:1;letter-spacing:-0.199px;left:584.50px;">Advanced</div>
<div id="help" style="position:absolute;top:186.50px;font-size:16.5px;line-height:18px;color:#475d8a;white-space:nowrap;font-family:'Liberation Sans', sans-serif;z-index:1;letter-spacing:-0.156px;left:1540.00px;">Help</div>
<div id="l_entry" style="position:absolute;top:238.80px;font-size:15.5px;line-height:17px;color:#555;white-space:nowrap;font-family:'Liberation Sans', sans-serif;z-index:1;font-weight:700;letter-spacing:-0.424px;left:128.00px;">Entry type</div>
<div id="l_ds" style="position:absolute;top:260.80px;font-size:15.5px;line-height:17px;color:#444;white-space:nowrap;font-family:'Liberation Sans', sans-serif;z-index:1;letter-spacing:-0.397px;left:127.60px;">DataSets <span style="font-size:14px;color:#777">(33)</span></div>
<div id="l_ser" style="position:absolute;top:282.70px;font-size:15.5px;line-height:17px;color:#444;white-space:nowrap;font-family:'Liberation Sans', sans-serif;z-index:1;letter-spacing:-0.397px;left:127.60px;">Series <span style="font-size:14px;color:#777">(891)</span></div>
<div id="l_samp" style="position:absolute;top:303.70px;font-size:15.5px;line-height:17px;color:#444;white-space:nowrap;font-family:'Liberation Sans', sans-serif;z-index:1;letter-spacing:-0.397px;left:127.60px;">Samples <span style="font-size:14px;color:#777">(9,965)</span></div>
<div id="l_plat" style="position:absolute;top:325.90px;font-size:15.5px;line-height:17px;color:#444;white-space:nowrap;font-family:'Liberation Sans', sans-serif;z-index:1;letter-spacing:-0.397px;left:127.60px;">Platforms <span style="font-size:14px;color:#777">(12)</span></div>
<div id="l_org" style="position:absolute;top:363.80px;font-size:15.5px;line-height:17px;color:#555;white-space:nowrap;font-family:'Liberation Sans', sans-serif;z-index:1;font-weight:700;letter-spacing:-0.594px;left:128.00px;">Organism</div>
<div id="l_homo" style="position:absolute;top:384.80px;font-size:15.5px;line-height:17px;color:#444;white-space:nowrap;font-family:'Liberation Sans', sans-serif;z-index:1;letter-spacing:-0.266px;left:127.60px;">Homo sapiens <span style="font-size:14px;color:#777">(9,027)</span></div>
<div id="l_cust1" style="position:absolute;top:406.80px;font-size:15.5px;line-height:17px;color:#444;white-space:nowrap;font-family:'Liberation Sans', sans-serif;z-index:1;letter-spacing:-0.454px;left:127.60px;">Customize ...</div>
<div id="l_study" style="position:absolute;top:445.20px;font-size:15.5px;line-height:17px;color:#555;white-space:nowrap;font-family:'Liberation Sans', sans-serif;z-index:1;font-weight:700;letter-spacing:-0.424px;left:128.00px;">Study type</div>
<div id="l_expr" style="position:absolute;top:465.90px;font-size:15.5px;line-height:17px;color:#444;white-space:nowrap;font-family:'Liberation Sans', sans-serif;z-index:1;letter-spacing:-0.397px;left:127.60px;">Expression profiling by high</div>
<div id="l_thr" style="position:absolute;top:483.50px;font-size:15.5px;line-height:17px;color:#444;white-space:nowrap;font-family:'Liberation Sans', sans-serif;z-index:1;letter-spacing:-0.397px;left:137.00px;">throughput sequencing</div>
<div id="l_ncr" style="position:absolute;top:505.70px;font-size:15.5px;line-height:17px;color:#444;white-space:nowrap;font-family:'Liberation Sans', sans-serif;z-index:1;letter-spacing:-0.397px;left:127.60px;">Non-coding RNA profiling by</div>
<div id="l_hth" style="position:absolute;top:523.30px;font-size:15.5px;line-height:17px;color:#444;white-space:nowrap;font-family:'Liberation Sans', sans-serif;z-index:1;letter-spacing:-0.397px;left:137.00px;">high throughput sequencing</div>
<div id="l_cust2" style="position:absolute;top:545.30px;font-size:15.5px;line-height:17px;color:#444;white-space:nowrap;font-family:'Liberation Sans', sans-serif;z-index:1;letter-spacing:-0.454px;left:127.60px;">Customize ...</div>
<div id="l_auth" style="position:absolute;top:581.60px;font-size:15.5px;line-height:17px;color:#555;white-space:nowrap;font-family:'Liberation Sans', sans-serif;z-index:1;font-weight:700;letter-spacing:-0.424px;left:128.00px;">Author</div>
<div id="l_cust3" style="position:absolute;top:604.60px;font-size:15.5px;line-height:17px;color:#444;white-space:nowrap;font-family:'Liberation Sans', sans-serif;z-index:1;letter-spacing:-0.454px;left:127.60px;">Customize ...</div>
<div id="l_attr" style="position:absolute;top:641.70px;font-size:15.5px;line-height:17px;color:#555;white-space:nowrap;font-family:'Liberation Sans', sans-serif;z-index:1;font-weight:700;letter-spacing:-0.424px;left:128.00px;">Attribute name</div>
<div id="l_tiss" style="position:absolute;top:663.90px;font-size:15.5px;line-height:17px;color:#444;white-space:nowrap;font-family:'Liberation Sans', sans-serif;z-index:1;letter-spacing:-0.397px;left:127.60px;">tissue <span style="font-size:14px;color:#777">(4,936)</span></div>
<div id="l_strain" style="position:absolute;top:685.40px;font-size:15.5px;line-height:17px;color:#444;white-space:nowrap;font-family:'Liberation Sans', sans-serif;z-index:1;letter-spacing:-0.397px;left:127.60px;">strain <span style="font-size:14px;color:#777">(306)</span></div>
<div id="l_cust4" style="position:absolute;top:706.80px;font-size:15.5px;line-height:17px;color:#444;white-space:nowrap;font-family:'Liberation Sans', sans-serif;z-index:1;letter-spacing:-0.454px;left:127.60px;">Customize ...</div>
<div id="l_pub" style="position:absolute;top:744.70px;font-size:15.5px;line-height:17px;color:#555;white-space:nowrap;font-family:'Liberation Sans', sans-serif;z-index:1;font-weight:700;letter-spacing:-0.424px;left:128.00px;">Publication dates</div>
<div id="l_30" style="position:absolute;top:766.80px;font-size:15.5px;line-height:17px;color:#444;white-space:nowrap;font-family:'Liberation Sans', sans-serif;z-index:1;letter-spacing:-0.397px;left:127.60px;">30 days</div>
<div id="l_1y" style="position:absolute;top:789.00px;font-size:15.5px;line-height:17px;color:#444;white-space:nowrap;font-family:'Liberation Sans', sans-serif;z-index:1;letter-spacing:-0.397px;left:127.60px;">1 year</div>
<div id="l_cr" style="position:absolute;top:810.20px;font-size:15.5px;line-height:17px;color:#444;white-space:nowrap;font-family:'Liberation Sans', sans-serif;z-index:1;letter-spacing:-0.397px;left:127.60px;">Custom range...</div>
<div id="l_clear" style="position:absolute;top:857.70px;font-size:15.5px;line-height:17px;color:#4b5f80;white-space:nowrap;font-family:'Liberation Sans', sans-serif;z-index:1;text-decoration:underline;letter-spacing:-0.397px;left:127.60px;">Clear all</div>
<div id="l_show" style="position:absolute;top:894.30px;font-size:15.5px;line-height:17px;color:#4b5f80;white-space:nowrap;font-family:'Liberation Sans', sans-serif;z-index:1;text-decoration:underline;letter-spacing:-0.397px;left:127.60px;">Show additional filters</div>
<div id="summ" style="position:absolute;top:241.20px;font-size:16px;line-height:17px;color:#394455;white-space:nowrap;font-family:'Liberation Sans', sans-serif;z-index:1;letter-spacing:-0.009px;left:372.10px;">Summary</div>
<div id="perpage" style="position:absolute;top:241.20px;font-size:16px;line-height:17px;color:#394455;white-space:nowrap;font-family:'Liberation Sans', sans-serif;z-index:1;letter-spacing:-0.041px;left:467.70px;">20 per page</div>
<div id="sortby" style="position:absolute;top:241.20px;font-size:16px;line-height:17px;color:#394455;white-space:nowrap;font-family:'Liberation Sans', sans-serif;z-index:1;letter-spacing:0.079px;left:579.50px;">Sort by Default order</div>
<div id="sendto" style="position:absolute;top:241.20px;font-size:16px;line-height:17px;color:#394455;white-space:nowrap;font-family:'Liberation Sans', sans-serif;z-index:1;letter-spacing:-0.073px;left:1118.90px;">Send to:</div>
<div id="sres" style="position:absolute;top:300.20px;font-size:19.5px;line-height:22px;color:#8a5c3a;white-space:nowrap;font-family:'Liberation Sans', sans-serif;z-index:1;font-weight:700;letter-spacing:0.161px;left:372.00px;">Search results</div>
<div id="items" style="position:absolute;top:335.50px;font-size:17px;line-height:19px;color:#55463a;white-space:nowrap;font-family:'Liberation Sans', sans-serif;z-index:1;font-weight:700;letter-spacing:0.140px;left:372.00px;">Items: 1 to 20 of 10901</div>
<div id="first" style="position:absolute;top:339.00px;font-size:14px;line-height:16px;color:#c2c2c2;white-space:nowrap;font-family:'Liberation Sans', sans-serif;z-index:1;letter-spacing:-0.181px;left:840.10px;">&lt;&lt; First</div>
<div id="prev" style="position:absolute;top:339.00px;font-size:14px;line-height:16px;color:#c2c2c2;white-space:nowrap;font-family:'Liberation Sans', sans-serif;z-index:1;letter-spacing:-0.372px;left:904.00px;">&lt; Prev</div>
<div id="page" style="position:absolute;top:339.00px;font-size:14px;line-height:16px;color:#222;white-space:nowrap;font-family:'Liberation Sans', sans-serif;z-index:1;letter-spacing:-0.534px;left:959.20px;">Page</div>
<div id="pg1" style="position:absolute;top:339.00px;font-size:14px;line-height:16px;color:#222;white-space:nowrap;font-family:'Liberation Sans', sans-serif;z-index:1;left:1001.00px;">1</div>
<div id="of546" style="position:absolute;top:339.00px;font-size:14px;line-height:16px;color:#222;white-space:nowrap;font-family:'Liberation Sans', sans-serif;z-index:1;letter-spacing:-0.267px;left:1031.00px;">of 546</div>
<div id="next" style="position:absolute;top:339.00px;font-size:14px;line-height:16px;color:#3d5173;white-space:nowrap;font-family:'Liberation Sans', sans-serif;z-index:1;letter-spacing:-0.392px;left:1086.30px;">Next &gt;</div>
<div id="last" style="position:absolute;top:339.00px;font-size:14px;line-height:16px;color:#3d5173;white-space:nowrap;font-family:'Liberation Sans', sans-serif;z-index:1;letter-spacing:-0.367px;left:1145.60px;">Last &gt;&gt;</div>
<div id="r1t" style="position:absolute;top:401.30px;font-size:18px;line-height:20px;color:#35357e;white-space:nowrap;font-family:'Liberation Sans', sans-serif;z-index:1;text-decoration:underline;letter-spacing:-0.016px;left:407.20px;">Mutant HLA-F-adjacent transcript 10 overexpression effect on HCT116 <b>colon cancer</b></div>
<div id="r1d1" style="position:absolute;top:452.80px;font-size:16px;line-height:17px;color:#222;white-space:nowrap;font-family:'Liberation Sans', sans-serif;z-index:1;letter-spacing:0.105px;right:652.00px;">Analysis of HCT116 colon cancer cells expressing wildtype HLA-F-adjacent transcript 10 (FAT10) or FAT10</div>
<div id="r1d2" style="position:absolute;top:474.50px;font-size:16px;line-height:17px;color:#222;white-space:nowrap;font-family:'Liberation Sans', sans-serif;z-index:1;letter-spacing:0.105px;right:673.00px;">mutants lacking the mitotic arrest-deficient 2 (MAD2)-binding region 1 (M1), region 2</div>
<div id="r1d3" style="position:absolute;top:496.30px;font-size:16px;line-height:17px;color:#222;white-space:nowrap;font-family:'Liberation Sans', sans-serif;z-index:1;letter-spacing:0.105px;right:651.00px;">(M2), or both. Results assess the molecular effects of abrogating the FAT10-</div>
<div id="r1m1" style="position:absolute;top:538.70px;font-size:14px;line-height:16px;color:#222;white-space:nowrap;font-family:'Liberation Sans', sans-serif;z-index:1;letter-spacing:0.491px;right:1078.00px;">Organism: Homo sapiens</div>
<div id="r1m2" style="position:absolute;top:558.50px;font-size:14px;line-height:16px;color:#222;white-space:nowrap;font-family:'Liberation Sans', sans-serif;z-index:1;letter-spacing:0.491px;right:681.20px;">Type: Expression profiling by array, transformed count, 5 genotype/variation sets</div>
<div id="r1m3" style="position:absolute;top:578.50px;font-size:14px;line-height:16px;color:#5a6a85;white-space:nowrap;font-family:'Liberation Sans', sans-serif;z-index:1;letter-spacing:0.491px;right:963.60px;">Platform: GPL6244 Series: GSE54167 &nbsp;10 Samples</div>
<div id="r1id" style="position:absolute;top:623.30px;font-size:14px;line-height:16px;color:#666;white-space:nowrap;font-family:'Liberation Sans', sans-serif;z-index:1;letter-spacing:0.438px;left:641.20px;">ID: 5439</div>
<div id="r1sim" style="position:absolute;top:643.20px;font-size:14px;line-height:16px;color:#5a6a85;white-space:nowrap;font-family:'Liberation Sans', sans-serif;z-index:1;text-decoration:underline;letter-spacing:0.491px;right:1017.00px;">Similar studies</div>
<div id="r1geo" style="position:absolute;top:643.20px;font-size:14px;line-height:16px;color:#5a6a85;white-space:nowrap;font-family:'Liberation Sans', sans-serif;z-index:1;text-decoration:underline;letter-spacing:0.491px;left:734.50px;">GEO Profiles</div>
<div id="r1an" style="position:absolute;top:643.20px;font-size:14px;line-height:16px;color:#5a6a85;white-space:nowrap;font-family:'Liberation Sans', sans-serif;z-index:1;text-decoration:underline;letter-spacing:0.493px;left:844.80px;">Analyze DataSet</div>
<div id="r2t" style="position:absolute;top:687.40px;font-size:18px;line-height:20px;color:#35357e;white-space:nowrap;font-family:'Liberation Sans', sans-serif;z-index:1;text-decoration:underline;letter-spacing:-0.016px;right:660.90px;">Rosemary extract effect on SW620 <b>colon cancer</b> cells: dose response</div>
<div id="r2d1" style="position:absolute;top:714.60px;font-size:16px;line-height:17px;color:#222;white-space:nowrap;font-family:'Liberation Sans', sans-serif;z-index:1;letter-spacing:0.105px;right:681.00px;">Analysis of colorectal adenocarcinoma derived-SW620 <b>colon cancer</b> cells treated with supercritical</div>
<div id="r2d2" style="position:absolute;top:736.70px;font-size:16px;line-height:17px;color:#222;white-space:nowrap;font-family:'Liberation Sans', sans-serif;z-index:1;letter-spacing:0.105px;right:674.70px;">rosemary extract (RE) at doses of 30, 60 and 100 µg/mL. RE contains carnosic acid and</div>
<div id="r2d3" style="position:absolute;top:758.70px;font-size:16px;line-height:17px;color:#222;white-space:nowrap;font-family:'Liberation Sans', sans-serif;z-index:1;letter-spacing:0.105px;right:675.00px;">carnosol and various essential oils. Results provide insight into the molecular basis of</div>
<div id="r2m1" style="position:absolute;top:802.00px;font-size:14px;line-height:16px;color:#222;white-space:nowrap;font-family:'Liberation Sans', sans-serif;z-index:1;letter-spacing:0.491px;right:1077.00px;">Organism: Homo sapiens</div>
<div id="r2m2" style="position:absolute;top:821.80px;font-size:14px;line-height:16px;color:#222;white-space:nowrap;font-family:'Liberation Sans', sans-serif;z-index:1;letter-spacing:0.491px;right:771.30px;">Type: Expression profiling by array, transformed count, 4 dose sets</div>
<div id="r2m3" style="position:absolute;top:841.50px;font-size:14px;line-height:16px;color:#5a6a85;white-space:nowrap;font-family:'Liberation Sans', sans-serif;z-index:1;letter-spacing:0.491px;right:980.80px;">Platform: GPL570 Series: GSE56496 &nbsp;8 Samples</div>
<div id="r2acc" style="position:absolute;top:885.70px;font-size:14px;line-height:16px;color:#666;white-space:nowrap;font-family:'Liberation Sans', sans-serif;z-index:1;letter-spacing:0.491px;right:1105.00px;">Accession: GDS5416</div>
<div id="r2id" style="position:absolute;top:885.70px;font-size:14px;line-height:16px;color:#666;white-space:nowrap;font-family:'Liberation Sans', sans-serif;z-index:1;letter-spacing:0.438px;left:641.00px;">ID: 5416</div>
<div id="r2sim" style="position:absolute;top:906.10px;font-size:14px;line-height:16px;color:#5a6a85;white-space:nowrap;font-family:'Liberation Sans', sans-serif;z-index:1;text-decoration:underline;letter-spacing:0.419px;left:614.40px;">Similar studies</div>
<div id="r2geo" style="position:absolute;top:906.10px;font-size:14px;line-height:16px;color:#5a6a85;white-space:nowrap;font-family:'Liberation Sans', sans-serif;z-index:1;text-decoration:underline;letter-spacing:0.463px;left:734.60px;">GEO Profiles</div>
<div id="r2an" style="position:absolute;top:906.10px;font-size:14px;line-height:16px;color:#5a6a85;white-space:nowrap;font-family:'Liberation Sans', sans-serif;z-index:1;text-decoration:underline;letter-spacing:0.493px;left:844.80px;">Analyze DataSet</div>
<div id="r3t" style="position:absolute;top:950.80px;font-size:18px;line-height:20px;color:#35357e;white-space:nowrap;font-family:'Liberation Sans', sans-serif;z-index:1;text-decoration:underline;letter-spacing:-0.016px;right:704.60px;">CDK inhibitor R547 effect on <b>colon cancer</b> cell line: dose</div>
<div id="r3t2" style="position:absolute;top:974.90px;font-size:18px;line-height:20px;color:#35357e;white-space:nowrap;font-family:'Liberation Sans', sans-serif;z-index:1;text-decoration:underline;letter-spacing:-0.016px;right:1115.00px;">response</div>
<div id="r3d1" style="position:absolute;top:1002.00px;font-size:16px;line-height:17px;color:#222;white-space:nowrap;font-family:'Liberation Sans', sans-serif;z-index:1;letter-spacing:0.105px;right:653.00px;">Analysis of HCT116 colon <b>cancer</b> cells treated with the CDK inhibitor R547 at 3 doses for up</div>
<div id="filt" style="position:absolute;top:242.90px;font-size:16px;line-height:17px;color:#111;white-space:nowrap;font-family:'Liberation Sans', sans-serif;z-index:1;font-weight:700;letter-spacing:0.022px;left:1218.60px;">Filter your results:</div>
<div id="all" style="position:absolute;top:274.30px;font-size:16px;line-height:17px;color:#222;white-space:nowrap;font-family:'Liberation Sans', sans-serif;z-index:1;letter-spacing:0.072px;left:1243.50px;">All (10901)</div>
<div id="manage" style="position:absolute;top:305.40px;font-size:14.5px;line-height:16px;color:#3d5173;white-space:nowrap;font-family:'Liberation Sans', sans-serif;z-index:1;text-decoration:underline;letter-spacing:0.200px;left:1470.60px;">Manage Filters</div>
<div id="toporg" style="position:absolute;top:359.20px;font-size:17.5px;line-height:20px;color:#4a6283;white-space:nowrap;font-family:'Liberation Sans', sans-serif;z-index:1;letter-spacing:0.443px;left:1248.30px;">Top Organisms</div>
<div id="tree" style="position:absolute;top:359.20px;font-size:17.5px;line-height:20px;color:#4a6283;white-space:nowrap;font-family:'Liberation Sans', sans-serif;z-index:1;letter-spacing:0.141px;left:1381.70px;">[<u>Tree</u>]</div>
<div id="o1" style="position:absolute;top:389.00px;font-size:16px;line-height:17px;color:#222;white-space:nowrap;font-family:'Liberation Sans', sans-serif;z-index:1;letter-spacing:0.224px;left:1238.30px;">Homo sapiens <i style="color:#667">(9027)</i></div>
<div id="o2" style="position:absolute;top:411.80px;font-size:16px;line-height:17px;color:#222;white-space:nowrap;font-family:'Liberation Sans', sans-serif;z-index:1;letter-spacing:0.224px;left:1238.30px;">Mus musculus <i style="color:#667">(1864)</i></div>
<div id="o3" style="position:absolute;top:434.80px;font-size:16px;line-height:17px;color:#222;white-space:nowrap;font-family:'Liberation Sans', sans-serif;z-index:1;letter-spacing:0.224px;left:1238.30px;">Rattus norvegicus <i style="color:#667">(29)</i></div>
<div id="o4" style="position:absolute;top:457.80px;font-size:16px;line-height:17px;color:#222;white-space:nowrap;font-family:'Liberation Sans', sans-serif;z-index:1;letter-spacing:0.178px;left:1238.30px;">Canis lupus familiaris <i style="color:#667">(11)</i></div>
<div id="o5" style="position:absolute;top:480.70px;font-size:16px;line-height:17px;color:#222;white-space:nowrap;font-family:'Liberation Sans', sans-serif;z-index:1;letter-spacing:0.224px;left:1238.30px;">synthetic construct <i style="color:#667">(10)</i></div>
<div id="more" style="position:absolute;top:503.20px;font-size:16px;line-height:17px;color:#5a6a85;white-space:nowrap;font-family:'Liberation Sans', sans-serif;z-index:1;letter-spacing:0.224px;left:1223.70px;">More...</div>
<div id="findrel" style="position:absolute;top:571.70px;font-size:16px;line-height:17px;color:#8a6445;white-space:nowrap;font-family:'Liberation Sans', sans-serif;z-index:1;font-weight:700;letter-spacing:0.617px;left:1218.50px;">Find related data</div>
<div id="db" style="position:absolute;top:600.90px;font-size:16px;line-height:17px;color:#222;white-space:nowrap;font-family:'Liberation Sans', sans-serif;z-index:1;letter-spacing:-0.117px;left:1218.50px;">Database:</div>
<div id="sel" style="position:absolute;top:600.90px;font-size:16px;line-height:17px;color:#000;white-space:nowrap;font-family:'Liberation Sans', sans-serif;z-index:1;letter-spacing:-0.117px;left:1303.20px;">Select</div>
<div id="finditems" style="position:absolute;top:651.00px;font-size:16px;line-height:17px;color:#d9d9d9;white-space:nowrap;font-family:'Liberation Sans', sans-serif;z-index:1;letter-spacing:-0.117px;left:1238.50px;">Find items</div>
<div id="sdet" style="position:absolute;top:727.50px;font-size:16px;line-height:17px;color:#8a6445;white-space:nowrap;font-family:'Liberation Sans', sans-serif;z-index:1;font-weight:700;letter-spacing:0.546px;left:1219.70px;">Search details</div>
<div id="recent" style="position:absolute;top:796.50px;font-size:16px;line-height:17px;color:#8a6445;white-space:nowrap;font-family:'Liberation Sans', sans-serif;z-index:1;font-weight:700;letter-spacing:0.597px;left:1218.70px;">Recent activity</div>
<div id="turnoff" style="position:absolute;top:823.50px;font-size:14px;line-height:16px;color:#333;white-space:nowrap;font-family:'Liberation Sans', sans-serif;z-index:1;text-decoration:underline;letter-spacing:-0.083px;left:1471.00px;">Turn Off</div>
<div id="clear" style="position:absolute;top:823.50px;font-size:14px;line-height:16px;color:#3d5173;white-space:nowrap;font-family:'Liberation Sans', sans-serif;z-index:1;text-decoration:underline;letter-spacing:-0.167px;left:1534.40px;">Clear</div>
<div id="ra1" style="position:absolute;top:854.80px;font-size:16px;line-height:17px;color:#333;white-space:nowrap;font-family:'Liberation Sans', sans-serif;z-index:1;letter-spacing:0.073px;left:1250.80px;">colon cancer (10901)</div>
<div id="ra1db" style="position:absolute;top:875.50px;font-size:12px;line-height:14px;color:#8a8580;white-space:nowrap;font-family:'Liberation Sans', sans-serif;z-index:1;letter-spacing:0.250px;right:154.20px;">GEO DataSets</div>
<div id="ra2a" style="position:absolute;top:909.90px;font-size:16px;line-height:17px;color:#333;white-space:nowrap;font-family:'Liberation Sans', sans-serif;z-index:1;letter-spacing:0.144px;left:1250.50px;">(((colon cancer) AND human[Organism])</div>
<div id="ra2b" style="position:absolute;top:929.50px;font-size:16px;line-height:17px;color:#333;white-space:nowrap;font-family:'Liberation Sans', sans-serif;z-index:1;letter-spacing:0.099px;left:1250.50px;">AND "Expression profiling b... (5)</div>
<div id="ra2db" style="position:absolute;top:931.00px;font-size:12px;line-height:14px;color:#8a8580;white-space:nowrap;font-family:'Liberation Sans', sans-serif;z-index:1;letter-spacing:0.250px;right:154.20px;">GEO DataSets</div>
<div id="ra3a" style="position:absolute;top:965.50px;font-size:16px;line-height:17px;color:#333;white-space:nowrap;font-family:'Liberation Sans', sans-serif;z-index:1;letter-spacing:0.153px;left:1250.50px;">(((colon cancer) AND human) AND</div>
<div id="ra3b" style="position:absolute;top:985.20px;font-size:16px;line-height:17px;color:#333;white-space:nowrap;font-family:'Liberation Sans', sans-serif;z-index:1;letter-spacing:0.099px;left:1250.50px;">"Expression profiling by high thr..</div>
<div id="ra3db" style="position:absolute;top:985.80px;font-size:12px;line-height:14px;color:#8a8580;white-space:nowrap;font-family:'Liberation Sans', sans-serif;z-index:1;letter-spacing:0.250px;right:154.20px;">GEO DataSets</div>
<div id="p_org" style="position:absolute;top:429.50px;font-size:18px;line-height:20px;color:#666;white-space:nowrap;font-family:'Liberation Sans', sans-serif;z-index:20;letter-spacing:0.067px;left:241.70px;">Organism</div>
<div id="p_homo" style="position:absolute;top:472.30px;font-size:15.5px;line-height:17px;color:#333;white-space:nowrap;font-family:'Liberation Sans', sans-serif;z-index:20;letter-spacing:-0.362px;left:261.00px;">Homo sapiens</div>
<div id="p_add" style="position:absolute;top:504.20px;font-size:14.5px;line-height:16px;color:#333;white-space:nowrap;font-family:'Liberation Sans', sans-serif;z-index:20;font-weight:700;letter-spacing:-0.094px;left:249.00px;">Add</div>
<div id="p_human" style="position:absolute;top:534.30px;font-size:15px;line-height:17px;color:#111;white-space:nowrap;font-family:'Liberation Sans', sans-serif;z-index:20;letter-spacing:-0.362px;left:246.50px;">human</div>
<div id="dd0" style="position:absolute;top:561.10px;font-size:16px;line-height:17px;color:#2a3a4a;white-space:nowrap;font-family:'Liberation Sans', sans-serif;z-index:31;letter-spacing:0.081px;left:253.20px;">Coxsackievirus A20</div>
<div id="dd1" style="position:absolute;top:590.63px;font-size:16px;line-height:17px;color:#2a3a4a;white-space:nowrap;font-family:'Liberation Sans', sans-serif;z-index:31;letter-spacing:0.105px;left:253.20px;">Coxsackievirus A9</div>
<div id="dd2" style="position:absolute;top:620.16px;font-size:16px;line-height:17px;color:#2a3a4a;white-space:nowrap;font-family:'Liberation Sans', sans-serif;z-index:31;letter-spacing:0.105px;left:253.20px;">Coxsackievirus B4</div>
<div id="dd3" style="position:absolute;top:649.69px;font-size:16px;line-height:17px;color:#2a3a4a;white-space:nowrap;font-family:'Liberation Sans', sans-serif;z-index:31;letter-spacing:0.105px;left:253.20px;">Echinococcus canadensis</div>
<div id="dd4" style="position:absolute;top:679.22px;font-size:16px;line-height:17px;color:#2a3a4a;white-space:nowrap;font-family:'Liberation Sans', sans-serif;z-index:31;letter-spacing:0.105px;left:253.20px;">Echovirus E18</div>
<div id="dd5" style="position:absolute;top:708.75px;font-size:16px;line-height:17px;color:#2a3a4a;white-space:nowrap;font-family:'Liberation Sans', sans-serif;z-index:31;letter-spacing:0.105px;left:253.20px;">Enterovirus C</div>
<div id="dd6" style="position:absolute;top:738.28px;font-size:16px;line-height:17px;color:#2a3a4a;white-space:nowrap;font-family:'Liberation Sans', sans-serif;z-index:31;letter-spacing:0.105px;left:253.20px;">Hepacivirus C</div>
<div id="dd7" style="position:absolute;top:767.81px;font-size:16px;line-height:17px;color:#2a3a4a;white-space:nowrap;font-family:'Liberation Sans', sans-serif;z-index:31;letter-spacing:0.105px;left:253.20px;">Hepatitis B virus</div>
<div id="dd8" style="position:absolute;top:797.34px;font-size:16px;line-height:17px;color:#2a3a4a;white-space:nowrap;font-family:'Liberation Sans', sans-serif;z-index:31;letter-spacing:0.105px;left:253.20px;">Homo</div>
<div id="dd9" style="position:absolute;top:826.87px;font-size:16px;line-height:17px;color:#2a3a4a;white-space:nowrap;font-family:'Liberation Sans', sans-serif;z-index:31;letter-spacing:0.105px;left:253.20px;">Homo sapiens</div>
<div id="dd10" style="position:absolute;top:856.40px;font-size:16px;line-height:17px;color:#2a3a4a;white-space:nowrap;font-family:'Liberation Sans', sans-serif;z-index:31;letter-spacing:0.105px;left:253.20px;">Human Endogenous Retrovirus IDDMK1,2-22</div>
<div id="dd11" style="position:absolute;top:885.93px;font-size:16px;line-height:17px;color:#2a3a4a;white-space:nowrap;font-family:'Liberation Sans', sans-serif;z-index:31;letter-spacing:0.097px;left:253.20px;">Human T-cell lymphotrophic virus type 1 (is...</div>
<div id="dd12" style="position:absolute;top:915.46px;font-size:16px;line-height:17px;color:#2a3a4a;white-space:nowrap;font-family:'Liberation Sans', sans-serif;z-index:31;letter-spacing:0.105px;left:253.20px;">Human T-lymphotropic virus 1</div>
<div id="dd13" style="position:absolute;top:944.99px;font-size:16px;line-height:17px;color:#2a3a4a;white-space:nowrap;font-family:'Liberation Sans', sans-serif;z-index:31;letter-spacing:0.064px;left:253.20px;">Human adenovirus 12</div>
<div id="dd14" style="position:absolute;top:974.52px;font-size:16px;line-height:17px;color:#2a3a4a;white-space:nowrap;font-family:'Liberation Sans', sans-serif;z-index:31;letter-spacing:0.105px;left:253.20px;">Human adenovirus 40</div>
<div id="dd15" style="position:absolute;top:1004.05px;font-size:16px;line-height:17px;color:#2a3a4a;white-space:nowrap;font-family:'Liberation Sans', sans-serif;z-index:31;letter-spacing:0.105px;left:253.20px;">Human adenovirus 41</div>
<div id="tb_search" style="position:absolute;top:1046.00px;font-size:18px;line-height:20px;color:#c9c9c9;white-space:nowrap;font-family:'Liberation Sans', sans-serif;z-index:55;letter-spacing:1.100px;left:14.00px;">在这里输入你要搜索的内容</div>
<div id="tb_ch" style="position:absolute;top:1046.50px;font-size:13.5px;line-height:15px;color:#e8e8e8;white-space:nowrap;font-family:'Liberation Sans', sans-serif;z-index:55;left:1367.50px;">CH</div>
<div id="tb_ying" style="position:absolute;top:1042.50px;font-size:19.5px;line-height:22px;color:#f0f0f0;white-space:nowrap;font-family:'Liberation Sans', sans-serif;z-index:55;left:1419.00px;">英</div>
<div id="tb_jian" style="position:absolute;top:1042.50px;font-size:19.5px;line-height:22px;color:#f0f0f0;white-space:nowrap;font-family:'Liberation Sans', sans-serif;z-index:55;left:1491.50px;">简</div>
<div id="tb_time" style="position:absolute;top:1034.30px;font-size:15px;line-height:17px;color:#f0f0f0;white-space:nowrap;font-family:'Liberation Sans', sans-serif;z-index:55;left:1675.20px;">8 : 48 PM</div>
<div id="tb_date" style="position:absolute;top:1057.20px;font-size:15px;line-height:17px;color:#f0f0f0;white-space:nowrap;font-family:'Liberation Sans', sans-serif;z-index:55;left:1667.70px;">12/30/2020</div>
</body></html>
